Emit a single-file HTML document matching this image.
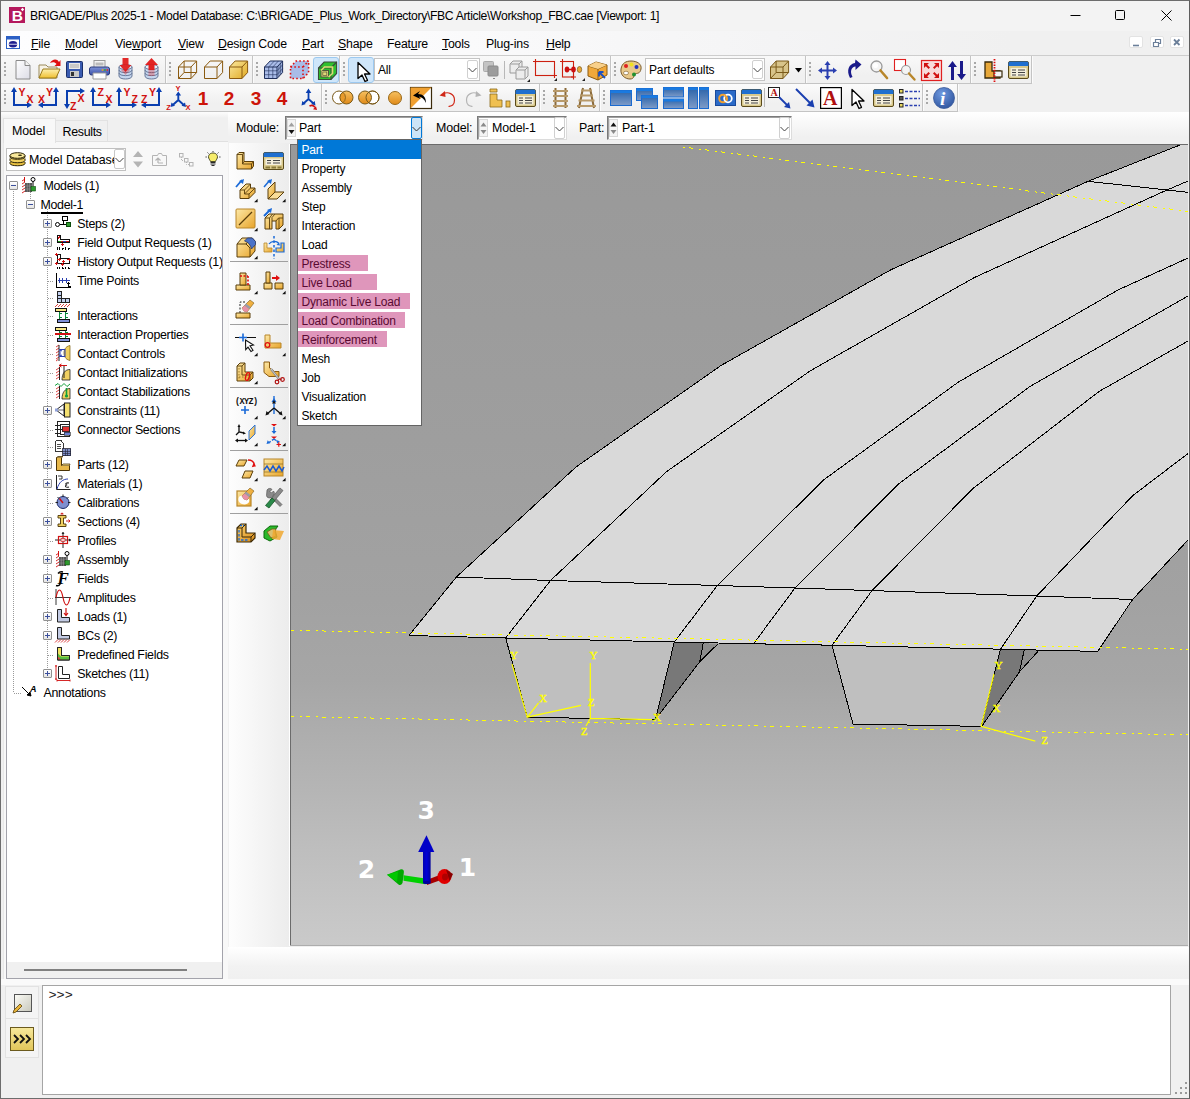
<!DOCTYPE html><html><head><meta charset="utf-8"><title>BRIGADE/Plus</title><style>
*{box-sizing:border-box}
html,body{margin:0;padding:0}
body{width:1190px;height:1099px;overflow:hidden;position:relative;background:#f0f0f0;
 font-family:"Liberation Sans",sans-serif;font-size:12px;color:#000;letter-spacing:-0.15px}
.a{position:absolute}
.t{position:absolute;white-space:pre;line-height:14px;height:14px}
u{text-decoration:underline;text-underline-offset:1px}
svg{position:absolute;overflow:visible}
.grip{position:absolute;width:2px;height:14px;background:repeating-linear-gradient(to bottom,#a8a8a8 0 2px,transparent 2px 4px)}
.tbg{position:absolute;border:1px solid #c9c9c9;border-top:none;border-left:none;background:#f0f0f0}
.combo{position:absolute;background:#fff;border:1px solid #c4c4c4}
.sunk{position:absolute;background:#fff;border:1px solid #7a7a7a;border-right-color:#dcdcdc;border-bottom-color:#dcdcdc;box-shadow:inset 1px 1px 0 #a0a0a0}
.row{position:absolute;left:0;height:19px;white-space:pre}
.bx{position:absolute;width:9px;height:9px;border:1px solid #919191;background:linear-gradient(#fff,#e4e4e4);border-radius:1px}
.bx:before{content:"";position:absolute;left:1px;top:3px;width:5px;height:1px;background:#3b4f9c}
.bx.p:after{content:"";position:absolute;left:3px;top:1px;width:1px;height:5px;background:#3b4f9c}
</style></head><body>
<div class="a" style="left:0;top:0;width:1190px;height:31px;background:#f3f3f3"></div>
<div class="a" style="left:9px;top:7px;width:16px;height:16px;background:#b4185c;border-radius:0"></div>
<div class="t" style="left:11.700px;top:7.500px;height:16px;line-height:16px;font-weight:bold;font-size:15.500px;color:#fff;letter-spacing:0">B</div><div class="a" style="left:21px;top:8px;width:3px;height:3px;background:#fff;transform:rotate(45deg) scale(.8)"></div>
<div class="t" style="left:30px;top:8px;font-size:12.2px;letter-spacing:-0.355px;line-height:16px;height:16px">BRIGADE/Plus 2025-1 - Model Database: C:\BRIGADE_Plus_Work_Directory\FBC Article\Workshop_FBC.cae [Viewport: 1]</div>
<svg style="left:1060px;top:0" width="130" height="31"><path d="M10.5 15.5h10" stroke="#000" fill="none"/><rect x="55.5" y="10.5" width="9" height="9" rx="1" stroke="#000" fill="none"/><path d="M101.5 10.5l10 10m0-10l-10 10" stroke="#000" fill="none"/></svg>
<div class="a" style="left:1px;top:31px;width:1188px;height:24px;background:linear-gradient(to right,#fdfdfe 0,#fbfbfc 35%,#f4f4f5 65%,#f0f0f0 85%)"></div>
<div class="a" style="left:1px;top:55px;width:1188px;height:1px;background:#cdcdcd"></div>
<svg style="left:6px;top:36px" width="15" height="14"><rect x=".5" y=".5" width="13" height="12" fill="#fff" stroke="#2b5fc4"/><rect x="1" y="1" width="12" height="2.5" fill="#2b5fc4"/><ellipse cx="7" cy="8.200" rx="4.200" ry="3.300" fill="#1f1f8f"/><rect x="2.500" y="7.800" width="9" height=".8" fill="#fff"/></svg>
<div class="t" style="left:31px;top:37px;font-size:12.3px;letter-spacing:-0.2px"><u>F</u>ile</div>
<div class="t" style="left:65px;top:37px;font-size:12.3px;letter-spacing:-0.2px"><u>M</u>odel</div>
<div class="t" style="left:115px;top:37px;font-size:12.3px;letter-spacing:-0.2px">Vie<u>w</u>port</div>
<div class="t" style="left:178px;top:37px;font-size:12.3px;letter-spacing:-0.2px"><u>V</u>iew</div>
<div class="t" style="left:218px;top:37px;font-size:12.3px;letter-spacing:-0.2px"><u>D</u>esign Code</div>
<div class="t" style="left:302px;top:37px;font-size:12.3px;letter-spacing:-0.2px"><u>P</u>art</div>
<div class="t" style="left:338px;top:37px;font-size:12.3px;letter-spacing:-0.2px"><u>S</u>hape</div>
<div class="t" style="left:387px;top:37px;font-size:12.3px;letter-spacing:-0.2px">Feat<u>u</u>re</div>
<div class="t" style="left:442px;top:37px;font-size:12.3px;letter-spacing:-0.2px"><u>T</u>ools</div>
<div class="t" style="left:486px;top:37px;font-size:12.3px;letter-spacing:-0.2px">Plu<u>g</u>-ins</div>
<div class="t" style="left:546px;top:37px;font-size:12.3px;letter-spacing:-0.2px"><u>H</u>elp</div>
<div class="a" style="left:1129px;top:36px;width:14px;height:12px;background:#fff;border:1px solid #e3e3e3;border-radius:2px"></div>
<div class="a" style="left:1150px;top:36px;width:14px;height:12px;background:#fff;border:1px solid #e3e3e3;border-radius:2px"></div>
<div class="a" style="left:1170px;top:36px;width:14px;height:12px;background:#fff;border:1px solid #e3e3e3;border-radius:2px"></div>
<svg style="left:1129px;top:36px" width="56" height="12"><path d="M4 9.5h6" stroke="#6b7f99" stroke-width="1.6" fill="none"/><path d="M24.5 6.5h5v4h-5z M26.5 6v-2.5h5v4h-2" stroke="#6b7f99" stroke-width="1.2" fill="none"/><path d="M45 3.5l5.5 5.5m0-5.5l-5.5 5.5" stroke="#6b7f99" stroke-width="1.8" fill="none"/></svg>
<div class="a" style="left:1px;top:56px;width:1188px;height:56px;background:#f0f0f0"></div>
<div class="a" style="left:1px;top:56px;width:1031px;height:27px;background:linear-gradient(#f9f9f9,#f0f0f0 70%)"></div>
<div class="a" style="left:1px;top:84px;width:957px;height:27px;background:linear-gradient(#fbfbfb,#f0f0f0 70%)"></div>
<div class="a" style="left:165px;top:56px;width:1px;height:27px;background:#c4c4c4;box-shadow:1px 0 0 #fbfbfb"></div>
<div class="grip" style="left:4px;top:62px"></div>
<div class="a" style="left:252px;top:56px;width:1px;height:27px;background:#c4c4c4;box-shadow:1px 0 0 #fbfbfb"></div>
<div class="grip" style="left:169px;top:62px"></div>
<div class="a" style="left:339px;top:56px;width:1px;height:27px;background:#c4c4c4;box-shadow:1px 0 0 #fbfbfb"></div>
<div class="grip" style="left:256px;top:62px"></div>
<div class="a" style="left:610px;top:56px;width:1px;height:27px;background:#c4c4c4;box-shadow:1px 0 0 #fbfbfb"></div>
<div class="grip" style="left:343px;top:62px"></div>
<div class="a" style="left:805px;top:56px;width:1px;height:27px;background:#c4c4c4;box-shadow:1px 0 0 #fbfbfb"></div>
<div class="grip" style="left:614px;top:62px"></div>
<div class="a" style="left:970px;top:56px;width:1px;height:27px;background:#c4c4c4;box-shadow:1px 0 0 #fbfbfb"></div>
<div class="grip" style="left:809px;top:62px"></div>
<div class="a" style="left:1031px;top:56px;width:1px;height:27px;background:#c4c4c4;box-shadow:1px 0 0 #fbfbfb"></div>
<div class="grip" style="left:974px;top:62px"></div>
<div class="a" style="left:321px;top:84px;width:1px;height:27px;background:#c4c4c4;box-shadow:1px 0 0 #fbfbfb"></div>
<div class="grip" style="left:4px;top:90px"></div>
<div class="a" style="left:539px;top:84px;width:1px;height:27px;background:#c4c4c4;box-shadow:1px 0 0 #fbfbfb"></div>
<div class="grip" style="left:325px;top:90px"></div>
<div class="a" style="left:599px;top:84px;width:1px;height:27px;background:#c4c4c4;box-shadow:1px 0 0 #fbfbfb"></div>
<div class="grip" style="left:543px;top:90px"></div>
<div class="a" style="left:922px;top:84px;width:1px;height:27px;background:#c4c4c4;box-shadow:1px 0 0 #fbfbfb"></div>
<div class="grip" style="left:603px;top:90px"></div>
<div class="a" style="left:957px;top:84px;width:1px;height:27px;background:#c4c4c4;box-shadow:1px 0 0 #fbfbfb"></div>
<div class="grip" style="left:926px;top:90px"></div>
<div class="a" style="left:1px;top:111px;width:957px;height:1px;background:#c4c4c4"></div>
<div class="a" style="left:1px;top:83px;width:1031px;height:1px;background:#c4c4c4"></div>
<svg width="0" height="0" style="left:0;top:0"><defs>
<linearGradient id="gpaper" x1="0" y1="0" x2="1" y2="1"><stop offset="0" stop-color="#fff"/><stop offset="1" stop-color="#dcdce6"/></linearGradient>
<linearGradient id="gfold" x1="0" y1="0" x2="0" y2="1"><stop offset="0" stop-color="#fdf0b0"/><stop offset="1" stop-color="#f0c030"/></linearGradient>
<linearGradient id="gprint" x1="0" y1="0" x2="0" y2="1"><stop offset="0" stop-color="#7f94d8"/><stop offset="1" stop-color="#3a4fa8"/></linearGradient>
<linearGradient id="gcube" x1="0" y1="0" x2="1" y2="1"><stop offset="0" stop-color="#fbe9a0"/><stop offset="1" stop-color="#e0a820"/></linearGradient>
<linearGradient id="gorange" x1="0" y1="0" x2="0" y2="1"><stop offset="0" stop-color="#f6c060"/><stop offset="1" stop-color="#e08a18"/></linearGradient>
<linearGradient id="gwin" x1="0" y1="0" x2="0" y2="1"><stop offset="0" stop-color="#2a62a8"/><stop offset="1" stop-color="#7f9cc8"/></linearGradient>
<radialGradient id="ginfo" cx=".4" cy=".3" r=".8"><stop offset="0" stop-color="#6f9ae0"/><stop offset="1" stop-color="#2a4f9a"/></radialGradient>
</defs></svg>
<style>.axl{font-family:"Liberation Sans",sans-serif;font-weight:bold;font-size:10.500px;fill:#d01010;letter-spacing:0}.axs{font-family:"Liberation Sans",sans-serif;font-weight:bold;font-size:7.500px;fill:#d01010;letter-spacing:0}</style>
<svg style="left:15px;top:60px" width="16" height="20"><path d="M1 .5h9l5 5v13.500h-14z" fill="url(#gpaper)" stroke="#8a8a8a"/><path d="M10 .5v5h5" fill="#f4f4f4" stroke="#8a8a8a"/></svg>
<svg style="left:38px;top:58px" width="23" height="21"><path d="M1 7h7l2 2h9v11h-18z" fill="#f7f3e6" stroke="#9a8a5a"/><path d="M1 20l4-9h17l-4 9z" fill="url(#gfold)" stroke="#9a7a1a"/><path d="M12 5c2-4 7-5 9-1l1.500-2v6h-6l2-2c-1.500-2-4-2-6.500-1z" fill="#e01010"/></svg>
<svg style="left:66px;top:61px" width="17" height="17"><rect x=".5" y=".5" width="16" height="16" rx="1" fill="#3a5bb0" stroke="#1a2f6a"/><rect x="3" y="2" width="11" height="6" fill="#e8e8e8"/><path d="M4 4h9M4 6h9" stroke="#999" stroke-width=".8"/><rect x="4" y="10" width="9" height="6" fill="#c8c8c8"/><rect x="5" y="11" width="3" height="4" fill="#333"/></svg>
<svg style="left:89px;top:60px" width="21" height="20"><rect x="5" y=".5" width="11" height="7" fill="#f4f4f4" stroke="#999"/><rect x="6.500" y="2.500" width="8" height="3" fill="#bbb"/><rect x=".5" y="7" width="20" height="8" rx="2" fill="url(#gprint)" stroke="#2a3a7a"/><circle cx="13.500" cy="10" r=".9" fill="#e8a020"/><circle cx="16" cy="10" r=".9" fill="#30b030"/><circle cx="18.300" cy="10" r=".9" fill="#e03030"/><path d="M4 13h13v6h-13z" fill="#fff" stroke="#999"/></svg>
<svg style="left:118px;top:58px" width="16" height="23"><path d="M1 9v9c0 4 13 4 13 0v-9" fill="#c6d6ee" stroke="#6a7a9a"/><ellipse cx="7.500" cy="9" rx="6.500" ry="2.500" fill="#e6eefa" stroke="#6a7a9a"/><path d="M1 12c0 3.500 13 3.500 13 0M1 15c0 3.500 13 3.500 13 0" fill="none" stroke="#6a7a9a"/><path d="M4.500 0h6v7h3l-6 7-6-7h3z" fill="#e01818" opacity=".92"/><path d="M3 12l4.500 5 4.500-5z" fill="#e01818" opacity=".35"/></svg>
<svg style="left:144px;top:58px" width="16" height="23"><path d="M1 9v9c0 4 13 4 13 0v-9" fill="#c6d6ee" stroke="#6a7a9a"/><ellipse cx="7.500" cy="9" rx="6.500" ry="2.500" fill="#e6eefa" stroke="#6a7a9a"/><path d="M1 12c0 3.500 13 3.500 13 0M1 15c0 3.500 13 3.500 13 0" fill="none" stroke="#6a7a9a"/><path d="M7.500 0l6.500 7h-3.500v5h-6v-5h-3.500z" fill="#e01818" opacity=".95"/><path d="M4.500 12h6v6h-6z" fill="#e01818" opacity=".3"/></svg>
<svg style="left:177.5px;top:59.5px" width="20" height="20"><path d="M.5 7l5.600-6h12.500v11.500l-5.600 6h-12.500z" fill="none" stroke="#8a5a10" stroke-width="1"/><path d="M.5 7h12.500v11.500M13 7l5.600-6" fill="none" stroke="#8a5a10" stroke-width="1"/><path d="M6.100 1v11.500h12.500M6.100 12.500l-5.600 6" fill="none" stroke="#8a5a10" stroke-width="1"/></svg>
<svg style="left:203.5px;top:59.5px" width="20" height="20"><path d="M.5 7l5.600-6h12.500v11.500l-5.600 6h-12.500z" fill="none" stroke="#8a5a10" stroke-width="1"/><path d="M.5 7h12.500v11.500M13 7l5.600-6" fill="none" stroke="#8a5a10" stroke-width="1"/></svg>
<svg style="left:229px;top:59.5px" width="20" height="20"><path d="M.5 7l5.600-6h12.500v11.500l-5.600 6h-12.500z" fill="url(#gcube)" stroke="#8a5a10" stroke-width="1"/><path d="M.5 7h12.500v11.500M13 7l5.600-6" fill="none" stroke="#8a5a10" stroke-width="1"/></svg>
<svg style="left:264px;top:59.5px" width="20" height="20"><path d="M.5 7l5.600-6h12.500v11.500l-5.600 6h-12.500z" fill="#a9bce8" stroke="#1f2f5a" stroke-width="1"/><path d="M.5 7h12.500v11.500M13 7l5.600-6" fill="none" stroke="#1f2f5a" stroke-width="1"/><path d="M.5 10.800h12.500l5.600-6M.5 14.700h12.500l5.600-6M4.700 7v11.500M8.800 7v11.500M4.700 7l5.600-6M8.800 7l5.600-6M14.900 5v11.500M16.700 3v11.500" stroke="#1f2f5a" stroke-width=".6" fill="none"/></svg>
<svg style="left:290px;top:59.5px" width="20" height="20"><path d="M.5 7l5.600-6h12.500v11.500l-5.600 6h-12.500z" fill="#a9bce8" stroke="#e01010" stroke-width="1.600" stroke-dasharray="1.600 2.200"/><path d="M.5 7h12.500v11.500M13 7l5.600-6" fill="none" stroke="#e01010" stroke-width="1.600" stroke-dasharray="1.600 2.200"/></svg>
<svg style="left:313px;top:57px" width="26" height="26"><rect x=".5" y=".5" width="25" height="25" rx="2.500" fill="#cfe6fa" stroke="#9cc9f0"/></svg>
<svg style="left:318px;top:60.5px" width="20" height="20"><path d="M.5 7l5.600-6h12.500v11.500l-5.600 6h-12.500z" fill="#2fc02f" stroke="#3a4a3a" stroke-width="1.100"/><path d="M.5 7h12.500v11.500M13 7l5.600-6" fill="none" stroke="#3a4a3a" stroke-width="1.100"/><rect x="3" y="9.500" width="7.500" height="6.500" fill="#e0d878" stroke="#4a4a3a" stroke-width=".9"/><path d="M3 9.500l3.500-3.500h8v6.500l-4 3.500" fill="none" stroke="#e0d878" stroke-width="1.600"/><rect x="4.800" y="11" width="4" height="3.500" fill="#e0d878" stroke="#5a5a3a" stroke-width=".7"/></svg>
<svg style="left:348px;top:57px" width="26" height="26"><rect x=".5" y=".5" width="25" height="25" rx="2.500" fill="#cfe6fa" stroke="#9cc9f0"/></svg>
<svg style="left:357px;top:61.5px" width="14" height="20"><path d="M1 .5v16l4-3.500 3 6.500 2.500-1.200-3-6.300h5.500z" fill="#fff" stroke="#000" stroke-width="1.300" stroke-linejoin="round"/></svg>
<svg style="left:483px;top:61px" width="16" height="18"><rect x=".5" y=".5" width="10" height="10" rx="1" fill="#c4c4c4" stroke="#aaa"/><rect x="5" y="5" width="10" height="10" rx="1" fill="#9c9c9c" stroke="#8a8a8a"/><path d="M10 17.500l2 0" stroke="#888"/></svg>
<svg style="left:504px;top:61px" width="1" height="18"><rect width="1" height="18" fill="#b8b8b8"/></svg>
<svg style="left:509px;top:60px" width="21" height="21"><g fill="#ececec" stroke="#9a9a9a" stroke-width="1"><path d="M1 4l3-3h9v9l-3 3h-9z"/><path d="M1 4h9v9M10 4l3-3"/><path d="M7 10l3-3h9v9l-3 3h-9z"/><path d="M7 10h9v9M16 10l3-3"/></g><path d="M21 19v3h-3z" fill="#222"/></svg>
<svg style="left:533px;top:59px" width="24" height="22"><rect x="2.500" y="2.500" width="19" height="14" fill="none" stroke="#cc2010" stroke-width="1.100"/><path d="M2.500 0v5M0 2.500h5M21.500 14v5M19 16.500h5" stroke="#cc2010" stroke-width="1.100"/><path d="M24 19v3h-3z" fill="#222"/></svg>
<svg style="left:561px;top:59px" width="24" height="22"><rect x="1.500" y="2.500" width="11" height="15.500" fill="none" stroke="#cc2010" stroke-width="1.100"/><path d="M1.500 0v5M-1 2.500h5M12.500 15.500v5M10 18h5" stroke="#cc2010" stroke-width="1.100"/><ellipse cx="6" cy="10.500" rx="2.300" ry="3" fill="#cc1010"/><ellipse cx="12.500" cy="10.500" rx="2.300" ry="3" fill="#cc1010"/><path d="M6 10.500h7" stroke="#cc1010" stroke-width="1.500"/><ellipse cx="18.500" cy="10.500" rx="2.200" ry="3" fill="#e8a83a" stroke="#7a5a1a" stroke-width=".7"/><path d="M24 19v3h-3z" fill="#222"/></svg>
<svg style="left:587px;top:59.5px" width="21" height="21"><path d="M1 6l8-4 11 3v10l-9 5-10-4z" fill="#f0a83a" stroke="#8a5a10"/><path d="M1 6l10 3v11M11 9l9-4" fill="none" stroke="#8a5a10"/><path d="M1 6l8-4 11 3-9 4z" fill="#f8d08a"/><path d="M18 18l-6-6M12 12v4.500M12 12h4.500" stroke="#1a4fc0" stroke-width="1.800" fill="none"/></svg>
<svg style="left:620px;top:60px" width="22" height="20"><path d="M11 1c6 0 11 3 10 8s-4 4-6 5 0 5-5 5-10-4-9-10 5-8 10-8z" fill="#e8c88a" stroke="#7a5a2a"/><circle cx="6" cy="6" r="2" fill="#e02020"/><circle cx="11.500" cy="4.500" r="2" fill="#f0e020"/><circle cx="16.500" cy="7" r="2" fill="#2030c0"/><circle cx="14" cy="14.500" r="2" fill="#209030"/><ellipse cx="6" cy="13" rx="2.500" ry="1.800" fill="#fff" stroke="#7a5a2a" stroke-width=".6"/></svg>
<svg style="left:770px;top:59.5px" width="20" height="20"><path d="M.5 7l5.600-6h12.500v11.500l-5.600 6h-12.500z" fill="#d8c48a" stroke="#7a5a1a" stroke-width="1"/><path d="M.5 7h12.500v11.500M13 7l5.600-6" fill="none" stroke="#7a5a1a" stroke-width="1"/><path d="M6.100 1v11.500h12.500M6.100 12.500l-5.600 6" fill="none" stroke="#7a5a1a" stroke-width="1"/></svg>
<svg style="left:795px;top:67.5px" width="8" height="5"><path d="M0 0h7l-3.500 4.500z" fill="#000"/></svg>
<svg style="left:818px;top:60.5px" width="19" height="19"><path d="M9.500 0l3 4h-2v4.500h4.500v-2l4 3-4 3v-2h-4.500v4.500h2l-3 4-3-4h2v-4.500h-4.500v2l-4-3 4-3v2h4.500v-4.500h-2z" fill="#2a3fb0"/></svg>
<svg style="left:846px;top:60px" width="16" height="20"><path d="M9 3c-6 1-9 7-5 15l2.500-1c-3-6-1-10 3-10.500v3.500l6-5.500-6-5z" fill="#1a1a8a"/></svg>
<svg style="left:870px;top:60px" width="18" height="20"><circle cx="6.500" cy="6.500" r="5.500" fill="#f4f4f4" stroke="#9a9a9a" stroke-width="1.300"/><circle cx="5.500" cy="5.500" r="2.500" fill="#fff"/><path d="M10.500 10.500l6.500 7.500" stroke="#b8862a" stroke-width="2.600" stroke-linecap="round"/></svg>
<svg style="left:893.5px;top:59px" width="22" height="22"><rect x=".5" y=".5" width="11" height="11" fill="#fff" stroke="#e02020" stroke-width="1.100"/><circle cx="12" cy="11" r="4.500" fill="#f4f4f4" stroke="#9a9a9a" stroke-width="1.200"/><path d="M15 14.500l5.500 6" stroke="#b8862a" stroke-width="2.400" stroke-linecap="round"/></svg>
<svg style="left:921px;top:59.5px" width="21" height="21"><rect x=".5" y=".5" width="20" height="20" fill="#f8dada" stroke="#e02020" stroke-width="1.200"/><path d="M3 3h5l-1.800 1.800 2.800 2.800-1.400 1.400-2.800-2.800-1.800 1.800zM18 3v5l-1.800-1.800-2.800 2.800-1.400-1.400 2.800-2.800-1.800-1.800zM3 18v-5l1.800 1.800 2.800-2.800 1.400 1.400-2.800 2.800 1.800 1.800zM18 18h-5l1.800-1.800-2.800-2.800 1.400-1.400 2.800 2.800 1.800-1.800z" fill="#d01010"/></svg>
<svg style="left:948px;top:60.5px" width="18" height="19"><path d="M4.500 0l4.500 6h-3v13h-3v-13h-3zM13.500 19l-4.500-6h3v-13h3v13h3z" fill="#1a1a8a"/></svg>
<svg style="left:984px;top:59px" width="19" height="23"><path d="M1 3h7v9h8v7h-15z" fill="#e8a83a" stroke="#3a2a0a" stroke-width="1.300"/><rect x="10" y="12" width="8" height="6" fill="#f4f4f4" stroke="#3a2a0a" stroke-width="1.200"/><path d="M10.500 0v23" stroke="#e01010" stroke-width="1.800" stroke-dasharray="1.500 1.200"/></svg>
<svg style="left:1008px;top:60px" width="21" height="20"><rect x=".5" y="1.500" width="20" height="17" rx="1.500" fill="#d9c98c" stroke="#5a4a1a"/><path d="M.5 3q0-1.500 1.500-1.500h17q1.500 0 1.500 1.500v3h-20z" fill="#1f6fd0"/><rect x="2.500" y="8" width="16" height="8.500" fill="#f4efdc"/><path d="M4 10h4M4 12.500h4M4 15h4M10 10h7M10 12.500h7M10 15h7" stroke="#444" stroke-width="1.200"/></svg>
<svg style="left:11px;top:87px" width="22" height="22"><path d="M3 3v15h15" stroke="#0a3fb0" stroke-width="2" fill="none"/><path d="M3 0l-3 5h6zM21 18l-5-3v6z" fill="#0a3fb0"/><text x="7.500" y="8.500" class="axl">Y</text><text x="15.500" y="15.500" class="axl">X</text></svg>
<svg style="left:37.5px;top:87px" width="22" height="22"><path d="M18 3v15h-15" stroke="#0a3fb0" stroke-width="2" fill="none"/><path d="M18 0l-3 5h6zM0 18l5-3v6z" fill="#0a3fb0"/><text x="8" y="8.500" class="axl">Y</text><text x="0" y="15.500" class="axl">X</text></svg>
<svg style="left:61.5px;top:86.5px" width="23" height="23"><path d="M5 19v-15h14" stroke="#0a3fb0" stroke-width="2" fill="none"/><path d="M5 22l-3-5h6zM23 4l-5-3v6z" fill="#0a3fb0"/><text x="15.500" y="14.500" class="axl">X</text><text x="8" y="22.500" class="axl">Z</text></svg>
<svg style="left:90px;top:87px" width="22" height="22"><path d="M3 3v15h15" stroke="#0a3fb0" stroke-width="2" fill="none"/><path d="M3 0l-3 5h6zM21 18l-5-3v6z" fill="#0a3fb0"/><text x="7.500" y="8.500" class="axl">Z</text><text x="15.500" y="15.500" class="axl">X</text></svg>
<svg style="left:115.5px;top:87px" width="22" height="22"><path d="M3 3v15h15" stroke="#0a3fb0" stroke-width="2" fill="none"/><path d="M3 0l-3 5h6zM21 18l-5-3v6z" fill="#0a3fb0"/><text x="7.500" y="8.500" class="axl">Y</text><text x="15.500" y="15.500" class="axl">Z</text></svg>
<svg style="left:141px;top:87px" width="22" height="22"><path d="M18 3v15h-15" stroke="#0a3fb0" stroke-width="2" fill="none"/><path d="M18 0l-3 5h6zM0 18l5-3v6z" fill="#0a3fb0"/><text x="8" y="8.500" class="axl">Y</text><text x="0" y="15.500" class="axl">Z</text></svg>
<svg style="left:166px;top:86px" width="24" height="24"><path d="M12.300 8v6l-5.500 5M12.300 14l5.500 5" stroke="#0a3fb0" stroke-width="1.900" fill="none"/><path d="M12.300 5.500l-2.800 4h5.600zM4.500 21l1-4.500 3.500 3.300zM20 21l-1-4.500-3.500 3.300z" fill="#0a3fb0"/><text x="12" y="5" class="axs" text-anchor="middle">Y</text><text x="2.500" y="24" class="axs" text-anchor="middle">Z</text><text x="22" y="24" class="axs" text-anchor="middle">X</text></svg>
<svg style="left:195px;top:88px" width="16" height="18"><text x="8" y="16.800" text-anchor="middle" font-family="Liberation Sans,sans-serif" font-weight="bold" font-size="19" fill="#cd1409" letter-spacing="0">1</text></svg>
<svg style="left:221.3px;top:88px" width="16" height="18"><text x="8" y="16.800" text-anchor="middle" font-family="Liberation Sans,sans-serif" font-weight="bold" font-size="19" fill="#cd1409" letter-spacing="0">2</text></svg>
<svg style="left:247.5px;top:88px" width="16" height="18"><text x="8" y="16.800" text-anchor="middle" font-family="Liberation Sans,sans-serif" font-weight="bold" font-size="19" fill="#cd1409" letter-spacing="0">3</text></svg>
<svg style="left:273.5px;top:88px" width="16" height="18"><text x="8" y="16.800" text-anchor="middle" font-family="Liberation Sans,sans-serif" font-weight="bold" font-size="19" fill="#cd1409" letter-spacing="0">4</text></svg>
<svg style="left:300px;top:87px" width="18" height="22"><path d="M8.500 5v7l-5 4.500M8.500 12l5 4.500" stroke="#0a3fb0" stroke-width="1.800" fill="none"/><path d="M8.500 1.500l-2.800 4.500h5.600zM1.500 18.500l.8-4.500 3.500 3zM15.500 18.500l-.8-4.500-3.500 3z" fill="#0a3fb0"/><path d="M9.500 19c2.500-1.200 4.500-.5 5.500 1.500" stroke="#d01010" stroke-width="1.600" fill="none"/><path d="M17 23l-4-.8 3-3z" fill="#d01010"/></svg>
<svg style="left:332px;top:90px" width="22" height="15"><circle cx="7" cy="7.500" r="6.500" fill="#fff" stroke="#7a5a1a"/><circle cx="14.500" cy="7.500" r="6.500" fill="url(#gorange)" stroke="#7a5a1a"/><path d="M10.750 2.200a6.500 6.500 0 0 1 0 10.600a6.500 6.500 0 0 1 0-10.600z" fill="#e89a2a" stroke="#7a5a1a" stroke-width=".8"/></svg>
<svg style="left:358px;top:90px" width="22" height="15"><circle cx="14.500" cy="7.500" r="6.500" fill="#fff" stroke="#7a5a1a"/><circle cx="7" cy="7.500" r="6.500" fill="url(#gorange)" stroke="#7a5a1a"/><circle cx="14.500" cy="7.500" r="6.500" fill="none" stroke="#7a5a1a"/></svg>
<svg style="left:388px;top:90.5px" width="14" height="14"><circle cx="7" cy="7" r="6.500" fill="url(#gorange)" stroke="#9a6a1a"/></svg>
<svg style="left:410px;top:87px" width="22" height="22"><rect x=".5" y=".5" width="21" height="21" fill="#fff" stroke="#3a2a0a" stroke-width="1.200"/><path d="M.5 21.500v-21h21z" fill="#f0a030"/><path d="M16 16c0-6-3-9-8-9l2-3-7 4.500 7.500 3.500-1.500-2.500c3 .5 5 2.500 7 6.500z" fill="#000"/></svg>
<svg style="left:438.5px;top:89px" width="17" height="17"><path d="M4 5c5-3 11.500 0 11.500 6s-3.500 6-6 6.500" fill="none" stroke="#d02818" stroke-width="1.200"/><path d="M.5 6.500l5.500-4.500.5 6z" fill="#d02818"/></svg>
<svg style="left:465px;top:89px" width="17" height="17"><path d="M13 5c-5-3-11.500 0-11.500 6s3.500 6 6 6.500" fill="none" stroke="#b4b4b4" stroke-width="1.200"/><path d="M16.500 6.500l-5.500-4.500-.5 6z" fill="#b4b4b4"/></svg>
<svg style="left:488.5px;top:88px" width="22" height="20"><path d="M1 1h7v3h-7z" fill="#f0c050" stroke="#8a6a1a" stroke-width=".8"/><path d="M1 6h7v6h5v7h-12z" fill="#f0c050" stroke="#8a6a1a" stroke-width=".8"/><rect x="17" y="13" width="4" height="6" fill="#f0c050" stroke="#8a6a1a" stroke-width=".8"/></svg>
<svg style="left:515px;top:88px" width="21" height="20"><rect x=".5" y="1.500" width="20" height="17" rx="1.500" fill="#d9c98c" stroke="#5a4a1a"/><path d="M.5 3q0-1.500 1.500-1.500h17q1.500 0 1.500 1.500v3h-20z" fill="#1f6fd0"/><rect x="2.500" y="8" width="16" height="8.500" fill="#f4efdc"/><path d="M4 10h4M4 12.500h4M4 15h4M10 10h7M10 12.500h7M10 15h7" stroke="#444" stroke-width="1.200"/></svg>
<svg style="left:552.5px;top:88px" width="15" height="20"><path d="M2.500 0v20M12.500 0v20" stroke="#8a6a3a" stroke-width="2"/><path d="M0 3h15M0 8h15M0 13h15M0 18h15" stroke="#b89a6a" stroke-width="2.200"/></svg>
<svg style="left:577px;top:88px" width="19" height="20"><path d="M6 0l-4 20M13 0l4 20" stroke="#8a6a3a" stroke-width="2"/><path d="M4 2.500h11M3 7.500h13M1.500 12.500h16M0 18h19" stroke="#b89a6a" stroke-width="2.200"/></svg>
<svg style="left:610px;top:90px" width="22" height="16"><rect x="0.5" y="0.5" width="21" height="15" fill="url(#gwin)" stroke="#1a6ad0" stroke-width="1"/><rect x="0.5" y="0.5" width="21" height="2.500" fill="#1a7ae0"/></svg>
<svg style="left:636px;top:87.5px" width="22" height="21"><rect x="0.5" y="0.5" width="16" height="12" fill="url(#gwin)" stroke="#1a6ad0" stroke-width="1"/><rect x="0.5" y="0.5" width="16" height="2.500" fill="#1a7ae0"/><rect x="5.5" y="7.5" width="16" height="13" fill="url(#gwin)" stroke="#1a6ad0" stroke-width="1"/><rect x="5.5" y="7.5" width="16" height="2.500" fill="#1a7ae0"/></svg>
<svg style="left:663px;top:87px" width="21" height="22"><rect x="0.5" y="0.5" width="20" height="9.5" fill="url(#gwin)" stroke="#1a6ad0" stroke-width="1"/><rect x="0.5" y="0.5" width="20" height="2.500" fill="#1a7ae0"/><rect x="0.5" y="12" width="20" height="9.5" fill="url(#gwin)" stroke="#1a6ad0" stroke-width="1"/><rect x="0.5" y="12" width="20" height="2.500" fill="#1a7ae0"/></svg>
<svg style="left:688px;top:87px" width="21" height="22"><rect x="0.5" y="0.5" width="9" height="21" fill="url(#gwin)" stroke="#1a6ad0" stroke-width="1"/><rect x="0.5" y="0.5" width="9" height="2.500" fill="#1a7ae0"/><rect x="11.5" y="0.5" width="9" height="21" fill="url(#gwin)" stroke="#1a6ad0" stroke-width="1"/><rect x="11.5" y="0.5" width="9" height="2.500" fill="#1a7ae0"/></svg>
<svg style="left:715px;top:90px" width="21" height="16"><rect x=".5" y=".5" width="20" height="15" fill="#2a6ac8" stroke="#1a4a9a"/><circle cx="8" cy="8.500" r="3.800" fill="none" stroke="#f0a030" stroke-width="2"/><circle cx="13" cy="8.500" r="3.800" fill="none" stroke="#fff" stroke-width="1.800"/><path d="M9.500 5.500a3.800 3.800 0 0 1 2 5" fill="none" stroke="#f0a030" stroke-width="2"/></svg>
<svg style="left:740.5px;top:88px" width="21" height="20"><rect x=".5" y="1.500" width="20" height="17" rx="1.500" fill="#d9c98c" stroke="#5a4a1a"/><path d="M.5 3q0-1.500 1.500-1.500h17q1.500 0 1.500 1.500v3h-20z" fill="#1f6fd0"/><rect x="2.500" y="8" width="16" height="8.500" fill="#f4efdc"/><path d="M4 10h4M4 12.500h4M4 15h4M10 10h7M10 12.500h7M10 15h7" stroke="#444" stroke-width="1.200"/></svg>
<svg style="left:764px;top:88px" width="1" height="19"><rect width="1" height="19" fill="#b8b8b8"/></svg>
<svg style="left:767.5px;top:87px" width="23" height="22"><rect x=".5" y=".5" width="11" height="10" fill="#fff" stroke="#222"/><text x="2.500" y="9" font-family="Liberation Serif,serif" font-weight="bold" font-size="10" fill="#b01010" letter-spacing="0">A</text><path d="M11 10l9 9" stroke="#1a3fb0" stroke-width="1.800"/><path d="M22.500 21.500l-6.500-1.500 5-5z" fill="#1a3fb0"/></svg>
<svg style="left:795px;top:88px" width="20" height="20"><path d="M1 1l14 14" stroke="#1a3fb0" stroke-width="2"/><path d="M19.500 19.500l-8-2 6-6z" fill="#1a3fb0"/></svg>
<svg style="left:820px;top:87px" width="22" height="22"><rect x=".6" y=".6" width="20.800" height="20.800" fill="#fff" stroke="#000" stroke-width="1.200"/><text x="3" y="18" font-family="Liberation Serif,serif" font-weight="bold" font-size="20" fill="#b01010" letter-spacing="0">A</text></svg>
<svg style="left:851px;top:88.5px" width="14" height="20"><path d="M1 .5v16l4-3.500 3 6.500 2.500-1.200-3-6.300h5.500z" fill="#fff" stroke="#000" stroke-width="1.300" stroke-linejoin="round"/></svg>
<svg style="left:873px;top:88px" width="21" height="20"><rect x=".5" y="1.500" width="20" height="17" rx="1.500" fill="#d9c98c" stroke="#5a4a1a"/><path d="M.5 3q0-1.500 1.500-1.500h17q1.500 0 1.500 1.500v3h-20z" fill="#1f6fd0"/><rect x="2.500" y="8" width="16" height="8.500" fill="#f4efdc"/><path d="M4 10h4M4 12.500h4M4 15h4M10 10h7M10 12.500h7M10 15h7" stroke="#444" stroke-width="1.200"/></svg>
<svg style="left:899px;top:88.5px" width="21" height="19"><g fill="#e8d860" stroke="#222" stroke-width="1"><rect x=".5" y=".5" width="3.500" height="3.500"/><rect x=".5" y="14.500" width="3.500" height="3.500"/></g><rect x=".5" y="7.500" width="3.500" height="3.500" fill="#555" stroke="#222"/><path d="M6 2.500h15M6 9.500h15M6 16.500h15" stroke="#2a3fb0" stroke-width="1.300" stroke-dasharray="3 1.500"/></svg>
<svg style="left:933px;top:87px" width="22" height="22"><circle cx="11" cy="11" r="10.500" fill="url(#ginfo)" stroke="#3a5a9a" stroke-width=".8"/><text x="7" y="17.500" font-family="Liberation Serif,serif" font-style="italic" font-weight="bold" font-size="19" fill="#fff" letter-spacing="0">i</text></svg>
<div class="combo" style="left:374px;top:58px;width:106px;height:23px"></div>
<div class="t" style="left:378px;top:62.5px;font-size:12px">All</div>
<div class="a" style="left:467px;top:60px;width:11px;height:19px;border:1px solid #d0d0d0;border-radius:2px;background:#fff"></div>
<svg style="left:468px;top:66.5px" width="9" height="6"><path d="M0.5 1l4 4 4-4" stroke="#444" fill="none"/></svg>
<div class="combo" style="left:645px;top:58px;width:120px;height:23px"></div>
<div class="t" style="left:649px;top:62.5px;font-size:12px">Part defaults</div>
<div class="a" style="left:752px;top:60px;width:11px;height:19px;border:1px solid #d0d0d0;border-radius:2px;background:#fff"></div>
<svg style="left:753px;top:66.5px" width="9" height="6"><path d="M0.5 1l4 4 4-4" stroke="#444" fill="none"/></svg>
<div class="a" style="left:1px;top:112px;width:227px;height:870px;background:#f0f0f0"></div>
<div class="a" style="left:1px;top:112px;width:1188px;height:6px;background:linear-gradient(#fdfdfd,#f0f0f0)"></div>
<div class="a" style="left:3px;top:142px;width:225px;height:843px;background:#f8f8f8;border-left:1px solid #e8e8e8"></div>
<div class="a" style="left:56px;top:141px;width:172px;height:1px;background:#e0e0e0"></div>
<div class="a" style="left:3px;top:118px;width:53px;height:25px;background:#f8f8f8;border:1px solid #e2e2e2;border-bottom:none"></div>
<div class="a" style="left:56px;top:120px;width:52px;height:21px;background:#f0f0f0;border:1px solid #e2e2e2;border-bottom:none;border-left:none"></div>
<div class="t" style="left:12px;top:124px;font-size:12.4px">Model</div>
<div class="t" style="left:62.500px;top:125px;font-size:12.4px;letter-spacing:-0.3px">Results</div>
<div class="combo" style="left:6px;top:148px;width:120px;height:23px;border-color:#c0c0c0"></div>
<div class="t" style="left:29px;top:153px;font-size:12.4px;letter-spacing:-0.05px">Model Database</div>
<div class="a" style="left:114px;top:149px;width:11px;height:20px;border:1px solid #c8c8c8;border-radius:2px;background:#fff"></div>
<svg style="left:115px;top:157px" width="9" height="6"><path d="M0.5 1l4 4 4-4" stroke="#444" fill="none"/></svg>
<svg style="left:8.500px;top:152px" width="17" height="15"><g stroke="#2a2206" stroke-width="1"><path d="M1 10v1.500c0 3 15 3 15 0v-1.500" fill="#e8c040"/><path d="M1 6.500v2c0 3 15 3 15 0v-2" fill="#f0d060"/><path d="M1 3.500v1.500c0 3 15 3 15 0v-1.500" fill="#f4dc78"/><ellipse cx="8.500" cy="3.500" rx="7.500" ry="2.800" fill="#f8e89a"/></g><ellipse cx="11" cy="3.300" rx="2" ry=".8" fill="#2a2206"/></svg>
<svg style="left:133px;top:151px" width="10" height="16"><path d="M0 6l5-6 5 6zM0 10.500l5 6 5-6z" fill="#b4b4b4"/></svg>
<svg style="left:152px;top:152.500px" width="15" height="13"><path d="M.5 2.500h5l1-2h3l1 2h4v10h-14z" fill="none" stroke="#b4b4b4"/><path d="M6 10v-5M3.500 7.500l2.500-2.500 2.500 2.500M6 10h5" fill="none" stroke="#b4b4b4" stroke-width="1.200"/></svg>
<svg style="left:178.500px;top:152.500px" width="15" height="14"><g fill="none" stroke="#b4b4b4"><rect x=".5" y=".5" width="3.500" height="3.500"/><rect x="5.500" y="5.500" width="3.500" height="3.500"/><rect x="10.500" y="9.500" width="3.500" height="3.500"/><path d="M2.500 4v3.500h3M7.500 9v2.500h3" stroke-dasharray="1 1"/></g></svg>
<svg style="left:204.500px;top:150.500px" width="16" height="16"><path d="M8 2c3.500 0 4.500 2.500 4.500 4s-1.500 3-2 4.500h-5c-.5-1.500-2-3-2-4.500s1-4 4.500-4z" fill="#f6ec6a" stroke="#3a3a1a" stroke-width=".9"/><path d="M5.500 11.500h5M5.500 13h5M6.500 14.500h3" stroke="#2a2a2a" stroke-width="1.100"/><path d="M8 0v1M2.500 1.500l1 1M13.500 1.500l-1 1M.5 6h1.300M14.200 6h1.300" stroke="#2a2a2a" stroke-width=".9"/></svg>
<div class="a" style="left:6px;top:175px;width:217px;height:804px;background:#fff;border:1px solid #a3a3ab"></div>
<div class="a" style="left:7px;top:962px;width:215px;height:16px;background:#f0f0f0"></div>
<div class="a" style="left:24px;top:969px;width:163px;height:2px;background:#808080"></div>
<div class="a" style="left:7px;top:176px;width:215px;height:786px;overflow:hidden">
<div class="a" style="left:6px;top:15px;width:1px;height:502px;background:repeating-linear-gradient(to bottom,#9a9a9a 0 1px,transparent 1px 2px)"></div>
<div class="a" style="left:23px;top:14px;width:1px;height:10px;background:repeating-linear-gradient(to bottom,#9a9a9a 0 1px,transparent 1px 2px)"></div>
<div class="a" style="left:40px;top:33px;width:1px;height:465px;background:repeating-linear-gradient(to bottom,#9a9a9a 0 1px,transparent 1px 2px)"></div>
<div class="bx" style="left:2px;top:5px"></div>
<svg style="left:14px;top:1px" width="16" height="16" viewBox="0 0 16 16"><path d="M1 4l3-2M1 7l3-2M1 10l3-2M1 13l3-2M1 16l3-2" stroke="#d01010" stroke-width=".9"/><path d="M3.5 0v5" stroke="#d01010"/><rect x="4" y="6" width="7" height="9" fill="#555"/><path d="M4 9h7M4 12h7M6.3 6v9M8.6 6v9" stroke="#999" stroke-width=".6"/><circle cx="12" cy="2.5" r="2" fill="#fff" stroke="#000"/><path d="M12 4.5v5" stroke="#000"/><rect x="10" y="9.5" width="4.5" height="4.5" fill="#2e9a2e" stroke="#0a4a0a" stroke-width=".6"/></svg>
<div class="t" style="left:36.5px;top:3px;font-size:12.4px;letter-spacing:-0.3px">Models (1)</div>
<div class="bx" style="left:19px;top:24px"></div>
<div class="t" style="left:33.5px;top:22px;font-size:12.4px;letter-spacing:-0.3px;border-bottom:2px solid #000;height:15.500px">Model-1</div>
<div class="bx p" style="left:36px;top:43px"></div>
<svg style="left:48px;top:38px" width="16" height="16" viewBox="0 0 16 16" shape-rendering="crispEdges"><path d="M4.500 10.500h7M8.500 6.500v4" stroke="#000"/><circle cx="2.500" cy="10.500" r="2" fill="#fff" stroke="#000" shape-rendering="auto"/><rect x="7.500" y="2.500" width="5" height="4" fill="#fff" stroke="#000"/><rect x="11.500" y="8.500" width="4" height="4" fill="#2e9a2e" stroke="#0a4a0a"/></svg>
<div class="t" style="left:70.3px;top:41px;font-size:12.4px;letter-spacing:-0.3px">Steps (2)</div>
<div class="bx p" style="left:36px;top:62px"></div>
<svg style="left:48px;top:58px" width="16" height="16" viewBox="0 0 16 16" shape-rendering="crispEdges"><path d="M2.500 1.500h3v4h9v3h-12z" fill="#fff" stroke="#111"/><path d="M3 5l2-3M6 7.500h3M11 7.500h3" stroke="#d01010"/><path d="M3 7.500h3" stroke="#1a9a1a"/><path d="M8 7.500h3" stroke="#2a3fb0"/><path d="M7.500 9v3M6 10.500h3" stroke="#d01010"/><path d="M2.500 13v3M4.500 13v3M10.500 13v3" stroke="#000"/><path d="M6.500 14.500h2M7.500 13.500v2M12.500 14.500h2M13.500 13.500v2" stroke="#000"/></svg>
<div class="t" style="left:70.3px;top:60px;font-size:12.4px;letter-spacing:-0.3px">Field Output Requests (1)</div>
<div class="bx p" style="left:36px;top:81px"></div>
<svg style="left:48px;top:77px" width="16" height="16" viewBox="0 0 16 16" shape-rendering="crispEdges"><path d="M2.500 1.500h3v4h9v5h-12z" fill="#fff" stroke="#111"/><path d="M0 1.500h3M1.500 0v3M2 6.500h4M4 5v3M12 6.500h4M14 5v3M7 8.500h3M8.500 7v3M0 10.500h3M1.500 9v3M7.500 10v3M6 11.500h3" stroke="#d01010"/><path d="M2.500 14v2M4.500 14v2M10.500 14v2" stroke="#000"/><path d="M6.500 15h2M7.500 14v2M12.500 15h2M13.500 14v2" stroke="#000"/></svg>
<div class="t" style="left:70.3px;top:79px;font-size:12.4px;letter-spacing:-0.3px">History Output Requests (1)</div>
<div class="a" style="left:41px;top:105px;width:5px;height:1px;background:repeating-linear-gradient(to right,#9a9a9a 0 1px,transparent 1px 2px)"></div>
<svg style="left:48px;top:97px" width="16" height="16" viewBox="0 0 16 16" shape-rendering="crispEdges"><path d="M1.500 0v14.500h14" stroke="#000" fill="none"/><path d="M3 7.500h12" stroke="#2a3fb0"/><path d="M4.500 5v5M7.500 5v5M11.500 5v5" stroke="#2a3fb0"/><path d="M13.500 9v4h2M12 10.500h3" stroke="#000" fill="none"/></svg>
<div class="t" style="left:70.3px;top:98px;font-size:12.4px;letter-spacing:-0.3px">Time Points</div>
<div class="a" style="left:41px;top:122px;width:5px;height:1px;background:repeating-linear-gradient(to right,#9a9a9a 0 1px,transparent 1px 2px)"></div>
<svg style="left:48px;top:115px" width="16" height="16" viewBox="0 0 16 16" shape-rendering="crispEdges"><path d="M2.500 .5h4v7h8v4h-12z" fill="#c3d1f0" stroke="#222"/><path d="M2.500 4h4M2.500 7.500h4M6.500 7.500v4M10.500 7.500v4" stroke="#222"/><path shape-rendering="auto" d="M0 16l3-3M3 16l3-3M6 16l3-3M9 16l3-3M12 16l3-3" stroke="#d01010" stroke-width=".8" fill="none"/></svg>
<div class="a" style="left:41px;top:140px;width:5px;height:1px;background:repeating-linear-gradient(to right,#9a9a9a 0 1px,transparent 1px 2px)"></div>
<svg style="left:48px;top:131px" width="16" height="16" viewBox="0 0 16 16" shape-rendering="crispEdges"><rect x=".5" y="1.500" width="11" height="3" fill="#f8e888" stroke="#111"/><rect x="2.500" y="12.500" width="12" height="3" fill="#7f90d8" stroke="#111"/><path d="M4.500 5v7M10.500 5v7" stroke="#0a8a3a"/><path d="M3.500 6.500h3M3.500 10.500h3M9.500 6.500h3M9.500 10.500h3" stroke="#0a8a3a"/></svg>
<div class="t" style="left:70.3px;top:133px;font-size:12.4px;letter-spacing:-0.3px">Interactions</div>
<div class="a" style="left:41px;top:159px;width:5px;height:1px;background:repeating-linear-gradient(to right,#9a9a9a 0 1px,transparent 1px 2px)"></div>
<svg style="left:48px;top:150px" width="16" height="16" viewBox="0 0 16 16" shape-rendering="crispEdges"><rect x=".5" y="1.500" width="11" height="3" fill="#f8e888" stroke="#111"/><rect x="2.500" y="12.500" width="12" height="3" fill="#7f90d8" stroke="#111"/><path d="M4.500 5v7M10.500 5v7" stroke="#0a8a3a"/><path d="M3.500 6.500h3M3.500 10.500h3M9.500 6.500h3M9.500 10.500h3" stroke="#0a8a3a"/><path d="M0 8h16" stroke="#d01010" stroke-width="1.3"/></svg>
<div class="t" style="left:70.3px;top:152px;font-size:12.4px;letter-spacing:-0.3px">Interaction Properties</div>
<div class="a" style="left:41px;top:178px;width:5px;height:1px;background:repeating-linear-gradient(to right,#9a9a9a 0 1px,transparent 1px 2px)"></div>
<svg style="left:48px;top:169px" width="16" height="16" viewBox="0 0 16 16"><path d="M1 2l3-2M1 5l3-2M1 8l3-2M1 11l3-2M1 14l3-2M1 16l2-1.5" stroke="#d01010" stroke-width=".8"/><path d="M4 0v16" stroke="#222"/><path d="M15 .5c-5 1-6 5-6 7.5s1 6.500 6 7.500z" fill="#f0d060" stroke="#7a5a0a" stroke-width=".7"/><rect x="5" y="4.5" width="5" height="7" fill="none" stroke="#2a3fb0"/><path d="M4 4.500l3 1.5M4 11.500l3-1.500" stroke="#2a3fb0"/></svg>
<div class="t" style="left:70.3px;top:171px;font-size:12.4px;letter-spacing:-0.3px">Contact Controls</div>
<div class="a" style="left:41px;top:197px;width:5px;height:1px;background:repeating-linear-gradient(to right,#9a9a9a 0 1px,transparent 1px 2px)"></div>
<svg style="left:48px;top:188px" width="16" height="16" viewBox="0 0 16 16"><path d="M1 6l3-2M1 9l3-2M1 12l3-2M1 15l3-2" stroke="#d01010" stroke-width=".8"/><path d="M4.5 3v13" stroke="#222"/><path d="M15 5.500c-5 0-8 4-8 10.500h8z" fill="#f0d060" stroke="#222" stroke-width=".8"/><path d="M9 2v12" stroke="#222"/><path d="M4 1.500h8M4 1.500l2.500-1.500M4 1.500l2.500 1.500" stroke="#d01010" fill="none"/></svg>
<div class="t" style="left:70.3px;top:190px;font-size:12.4px;letter-spacing:-0.3px">Contact Initializations</div>
<div class="a" style="left:41px;top:216px;width:5px;height:1px;background:repeating-linear-gradient(to right,#9a9a9a 0 1px,transparent 1px 2px)"></div>
<svg style="left:48px;top:207px" width="16" height="16" viewBox="0 0 16 16"><path d="M1 6l3-2M1 9l3-2M1 12l3-2M1 15l3-2" stroke="#d01010" stroke-width=".8"/><path d="M4.500 3v13" stroke="#222"/><path d="M15 5.500c-5 0-8 4-8 10.500h8z" fill="#f0d060" stroke="#222" stroke-width=".8"/><path d="M0 2.500l3-2 3 3 3-3 3 3 3-2.500" stroke="#12a03a" fill="none"/><path d="M11.500 5v8" stroke="#12a03a" stroke-width="1.600"/><circle cx="11.500" cy="13" r="1.600" fill="#12a03a"/></svg>
<div class="t" style="left:70.3px;top:209px;font-size:12.4px;letter-spacing:-0.3px">Contact Stabilizations</div>
<div class="bx p" style="left:36px;top:230px"></div>
<svg style="left:48px;top:226px" width="16" height="16" viewBox="0 0 16 16"><path d="M1 8l8-6v12z" fill="#fff" stroke="#222"/><path d="M1 8h8" stroke="#222" stroke-width=".7"/><rect x="9.500" y="1" width="5.500" height="14" fill="#f4e070" stroke="#222"/><rect x="0" y="6.500" width="3" height="3" fill="#8fa0d8"/></svg>
<div class="t" style="left:70.3px;top:228px;font-size:12.4px;letter-spacing:-0.3px">Constraints (11)</div>
<div class="a" style="left:41px;top:254px;width:5px;height:1px;background:repeating-linear-gradient(to right,#9a9a9a 0 1px,transparent 1px 2px)"></div>
<svg style="left:48px;top:245px" width="16" height="16" viewBox="0 0 16 16" shape-rendering="crispEdges"><rect x="2.500" y=".5" width="12" height="15" fill="#fff" stroke="#222"/><rect x="5" y="3" width="9" height="10" fill="none" stroke="#222"/><rect x="7" y="5.500" width="7" height="5" fill="#e03030" stroke="#222" stroke-width=".8"/><path d="M0 4h5M0 8h7M0 12h5" stroke="#222"/><rect x="9" y="11" width="6" height="3" fill="#6a7fd0" stroke="#222" stroke-width=".6"/></svg>
<div class="t" style="left:70.3px;top:247px;font-size:12.4px;letter-spacing:-0.3px">Connector Sections</div>
<div class="a" style="left:41px;top:271px;width:5px;height:1px;background:repeating-linear-gradient(to right,#9a9a9a 0 1px,transparent 1px 2px)"></div>
<svg style="left:48px;top:264px" width="16" height="16" viewBox="0 0 16 16" shape-rendering="crispEdges"><path d="M.5 .5h6l2 2v9h-8z" fill="#fff" stroke="#222" stroke-width=".9"/><path d="M2 4h4M2 6h4M2 8h4" stroke="#222" stroke-width=".8"/><rect x="7.500" y="8.500" width="8" height="7" fill="#7f8fc8" stroke="#223" stroke-width=".8"/><path d="M7.500 11h8M7.500 13.300h8M10.200 8.500v7M12.800 8.500v7" stroke="#223" stroke-width=".6"/></svg>
<div class="bx p" style="left:36px;top:284px"></div>
<svg style="left:48px;top:280px" width="16" height="16" viewBox="0 0 16 16"><path d="M1.500 1.500h5v8h8v5h-13z" fill="#e8b84a" stroke="#4a3206" stroke-width="1"/><path d="M1.500 1.500l1.500-1h5l-1.500 1M6.500 9.500l1.500-1.500h7l-.5 1.500" fill="#f6dc8a" stroke="#4a3206" stroke-width=".8"/></svg>
<div class="t" style="left:70.3px;top:282px;font-size:12.4px;letter-spacing:-0.3px">Parts (12)</div>
<div class="bx p" style="left:36px;top:303px"></div>
<svg style="left:48px;top:299px" width="16" height="16" viewBox="0 0 16 16"><path d="M1.500 0v14.500h14" stroke="#222" fill="none"/><path d="M2 14c2-7 6-10 11-10" stroke="#2a3fb0" fill="none"/><path d="M3 1h4v3h-3" stroke="#222" fill="none" stroke-width=".9"/><path d="M14 8c-3-.5-4 1-2.500 2-2 1-1 3 2.500 2" stroke="#222" fill="none" stroke-width="1.100"/></svg>
<div class="t" style="left:70.3px;top:301px;font-size:12.4px;letter-spacing:-0.3px">Materials (1)</div>
<div class="a" style="left:41px;top:327px;width:5px;height:1px;background:repeating-linear-gradient(to right,#9a9a9a 0 1px,transparent 1px 2px)"></div>
<svg style="left:48px;top:318px" width="16" height="16" viewBox="0 0 16 16"><circle cx="8" cy="8.500" r="6" fill="#7f8fd0" stroke="#1a2a6a" stroke-width="1"/><path d="M8 .5v2.500M.5 8.500h2.500M13 8.500h2.500M2.500 3l1.500 1.500M13.500 3l-1.500 1.500" stroke="#222"/><path d="M8 9l-3.500-4.500" stroke="#d01010" stroke-width="1.500"/></svg>
<div class="t" style="left:70.3px;top:320px;font-size:12.4px;letter-spacing:-0.3px">Calibrations</div>
<div class="bx p" style="left:36px;top:341px"></div>
<svg style="left:48px;top:337px" width="16" height="16" viewBox="0 0 16 16"><path d="M3 2.500h8v2.500h-2.500v6h2.500v2.500h-8v-2.500h2.500v-6h-2.500z" fill="#f0d060" stroke="#4a3206" stroke-width=".9"/><path d="M7 0v2.500M5.500 1l1.500-1 1.500 1M11 8h4M13.500 6.500l1.500 1.500-1.500 1.500" stroke="#d01010" fill="none" stroke-width=".9"/></svg>
<div class="t" style="left:70.3px;top:339px;font-size:12.4px;letter-spacing:-0.3px">Sections (4)</div>
<div class="a" style="left:41px;top:365px;width:5px;height:1px;background:repeating-linear-gradient(to right,#9a9a9a 0 1px,transparent 1px 2px)"></div>
<svg style="left:48px;top:356px" width="16" height="16" viewBox="0 0 16 16"><path d="M8 0v16M0 8h16" stroke="#222"/><rect x="3.500" y="4.500" width="9" height="7" fill="none" stroke="#d01010" stroke-width="1.200"/><rect x="6" y="6.500" width="4" height="3" fill="#f6c8c8" stroke="#d01010" stroke-width=".6"/><path d="M14 6.500l2 1.500-2 1.500M6.500 2l1.500-2 1.500 2" fill="#222"/></svg>
<div class="t" style="left:70.3px;top:358px;font-size:12.4px;letter-spacing:-0.3px">Profiles</div>
<div class="bx p" style="left:36px;top:379px"></div>
<svg style="left:48px;top:375px" width="16" height="16" viewBox="0 0 16 16"><path d="M1 4l3-2M1 7l3-2M1 10l3-2M1 13l3-2M1 16l3-2" stroke="#d01010" stroke-width=".9"/><path d="M3.5 0v5" stroke="#d01010"/><rect x="4" y="6" width="7" height="9" fill="#555"/><path d="M4 9h7M4 12h7M6.3 6v9M8.6 6v9" stroke="#999" stroke-width=".6"/><circle cx="12" cy="2.5" r="2" fill="#fff" stroke="#000"/><path d="M12 4.5v5" stroke="#000"/><rect x="10" y="9.5" width="4.5" height="4.5" fill="#2e9a2e" stroke="#0a4a0a" stroke-width=".6"/></svg>
<div class="t" style="left:70.3px;top:377px;font-size:12.4px;letter-spacing:-0.3px">Assembly</div>
<div class="bx p" style="left:36px;top:398px"></div>
<svg style="left:48px;top:394px" width="16" height="16" viewBox="0 0 16 16"><text x="2.500" y="13.500" font-family="Liberation Serif,serif" font-style="italic" font-weight="bold" font-size="17" fill="#000" letter-spacing="0">F</text><path d="M3 3.500c1.500-2 3-2 5-1.500M1 15.500c2 .8 3.500 0 4.500-2" stroke="#000" stroke-width="1.400" fill="none"/></svg>
<div class="t" style="left:70.3px;top:396px;font-size:12.4px;letter-spacing:-0.3px">Fields</div>
<div class="a" style="left:41px;top:422px;width:5px;height:1px;background:repeating-linear-gradient(to right,#9a9a9a 0 1px,transparent 1px 2px)"></div>
<svg style="left:48px;top:413px" width="16" height="16" viewBox="0 0 16 16"><path d="M1 0v16M0 8.500h16" stroke="#222" stroke-width=".9"/><path d="M1 8.500c2-10 5-10 7 0s5 10 7 0" stroke="#d01010" fill="none" stroke-width="1.200"/></svg>
<div class="t" style="left:70.3px;top:415px;font-size:12.4px;letter-spacing:-0.3px">Amplitudes</div>
<div class="bx p" style="left:36px;top:436px"></div>
<svg style="left:48px;top:432px" width="16" height="16" viewBox="0 0 16 16"><path d="M2.500 1.500h4v8h8v4.500h-12z" fill="#c3cbe4" stroke="#222" stroke-width="1"/><path d="M11 0v7M9 5l2 2.500 2-2.500" stroke="#d01010" fill="none" stroke-width="1.200"/></svg>
<div class="t" style="left:70.3px;top:434px;font-size:12.4px;letter-spacing:-0.3px">Loads (1)</div>
<div class="bx p" style="left:36px;top:455px"></div>
<svg style="left:48px;top:451px" width="16" height="16" viewBox="0 0 16 16"><path d="M2.500 .5h4v8h8v3.500h-12z" fill="#c3cbe4" stroke="#222" stroke-width="1"/><path d="M0 15.5l3-3M3 15.5l3-3M6 15.5l3-3M9 15.5l3-3M12 15.5l3-3" stroke="#d01010" stroke-width=".8" fill="none"/></svg>
<div class="t" style="left:70.3px;top:453px;font-size:12.4px;letter-spacing:-0.3px">BCs (2)</div>
<div class="a" style="left:41px;top:479px;width:5px;height:1px;background:repeating-linear-gradient(to right,#9a9a9a 0 1px,transparent 1px 2px)"></div>
<svg style="left:48px;top:470px" width="16" height="16" viewBox="0 0 16 16"><path d="M2.500 1.500h4v8h8v4.500h-12z" fill="#f0e060" stroke="#222" stroke-width="1"/><path d="M3 13.500l0-6 3 3 8 0v3z" fill="#58c040"/><path d="M3 13.500v-3l3 3z" fill="#e04040"/><path d="M2.500 1.500h4v8h8v4.500h-12z" fill="none" stroke="#222" stroke-width="1"/></svg>
<div class="t" style="left:70.3px;top:472px;font-size:12.4px;letter-spacing:-0.3px">Predefined Fields</div>
<div class="bx p" style="left:36px;top:493px"></div>
<svg style="left:48px;top:489px" width="16" height="16" viewBox="0 0 16 16"><path d="M3.500 1.500h4v8h7v4h-11z" fill="#fff" stroke="#222" stroke-width="1"/><path d="M1 0v15M2 15.500h13M2 14.500v2M15 14.500v2M0 1h2M0 14h2" stroke="#d01010" stroke-width=".9"/></svg>
<div class="t" style="left:70.3px;top:491px;font-size:12.4px;letter-spacing:-0.3px">Sketches (11)</div>
<div class="a" style="left:7px;top:517px;width:7px;height:1px;background:repeating-linear-gradient(to right,#9a9a9a 0 1px,transparent 1px 2px)"></div>
<svg style="left:15px;top:508px" width="16" height="16" viewBox="0 0 16 16"><path d="M0 3l9 9M9 12l-1-4-3 3z" stroke="#000" fill="#000" stroke-width="1"/><text x="8" y="8" font-family="Liberation Sans,sans-serif" font-weight="bold" font-style="italic" font-size="9" fill="#000">A</text></svg>
<div class="t" style="left:36.5px;top:510px;font-size:12.4px;letter-spacing:-0.3px">Annotations</div>
</div>
<div class="a" style="left:228px;top:112px;width:961px;height:31px;background:linear-gradient(#fff,#f0f0f0 80%)"></div>
<div class="t" style="left:236px;top:121px;font-size:12.4px">Module:</div>
<div class="sunk" style="left:285px;top:116px;width:138px;height:24px"></div>
<div class="t" style="left:299px;top:121px;font-size:12.4px">Part</div>
<div class="a" style="left:411px;top:117px;width:11px;height:22px;border:1px solid #0078d7;border-radius:2px;background:#cce4f7"></div>
<svg style="left:412px;top:126px" width="9" height="6"><path d="M0.5 1l4 4 4-4" stroke="#333" fill="none"/></svg>
<svg style="left:287px;top:119px" width="9" height="18"><rect x=".5" y=".5" width="8" height="17" fill="#f4f4f4" stroke="#d8d8d8"/><path d="M1.500 7.500l3-4 3 4z" fill="#a0a0a0"/><path d="M1.500 11l3 4 3-4z" fill="#111"/></svg>
<div class="t" style="left:436px;top:121px;font-size:12.4px">Model:</div>
<div class="sunk" style="left:477px;top:116px;width:90px;height:24px"></div>
<div class="t" style="left:492px;top:121px;font-size:12.4px">Model-1</div>
<div class="a" style="left:554px;top:117px;width:11px;height:22px;border:1px solid #d0d0d0;border-radius:2px;background:#fff"></div>
<svg style="left:555px;top:126px" width="9" height="6"><path d="M0.5 1l4 4 4-4" stroke="#444" fill="none"/></svg>
<svg style="left:479px;top:119px" width="9" height="18"><rect x=".5" y=".5" width="8" height="17" fill="#f4f4f4" stroke="#d8d8d8"/><path d="M1.500 7.500l3-4 3 4z" fill="#8a8a8a"/><path d="M1.500 11l3 4 3-4z" fill="#8a8a8a"/></svg>
<div class="t" style="left:579px;top:121px;font-size:12.4px">Part:</div>
<div class="sunk" style="left:607px;top:116px;width:185px;height:24px"></div>
<div class="t" style="left:622px;top:121px;font-size:12.4px">Part-1</div>
<div class="a" style="left:779px;top:117px;width:11px;height:22px;border:1px solid #d0d0d0;border-radius:2px;background:#fff"></div>
<svg style="left:780px;top:126px" width="9" height="6"><path d="M0.5 1l4 4 4-4" stroke="#444" fill="none"/></svg>
<svg style="left:609px;top:119px" width="9" height="18"><rect x=".5" y=".5" width="8" height="17" fill="#f4f4f4" stroke="#d8d8d8"/><path d="M1.500 7.500l3-4 3 4z" fill="#111"/><path d="M1.500 11l3 4 3-4z" fill="#8a8a8a"/></svg>
<div class="a" style="left:229px;top:143px;width:61px;height:804px;background:linear-gradient(to right,#fdfdfd,#ececec)"></div>
<svg width="0" height="0" style="left:0;top:0"><defs><linearGradient id="gy" x1="0" y1="0" x2="1" y2="1"><stop offset="0" stop-color="#fde9a8"/><stop offset="1" stop-color="#e8a42a"/></linearGradient><linearGradient id="gy2" x1="0" y1="0" x2="1" y2="1"><stop offset="0" stop-color="#f8d070"/><stop offset="1" stop-color="#d88a18"/></linearGradient></defs></svg>
<div class="a" style="left:230px;top:261px;width:58px;height:1px;background:#a0a0a0"></div>
<div class="a" style="left:230px;top:324px;width:58px;height:1px;background:#a0a0a0"></div>
<div class="a" style="left:230px;top:387px;width:58px;height:1px;background:#a0a0a0"></div>
<div class="a" style="left:230px;top:450px;width:58px;height:1px;background:#a0a0a0"></div>
<div class="a" style="left:230px;top:513px;width:58px;height:1px;background:#a0a0a0"></div>
<svg style="left:234.5px;top:150.5px" width="23" height="23"><path d="M2 3.500l2-2h5v9h9.500v4.500l-2 3h-14.500z" fill="url(#gy)" stroke="#5a3e0a" stroke-width="1"/><path d="M2 3.500h5.500v9.500h9v5M7.500 3.500l1.500-2M7.500 13l1.500-2.500M16.500 13l2-2.500" fill="none" stroke="#5a3e0a" stroke-width=".9"/></svg>
<svg style="left:262.5px;top:151px" width="23" height="23"><rect x=".5" y="1.500" width="20" height="17" rx="1.500" fill="#d9c98c" stroke="#5a4a1a"/><path d="M.5 3q0-1.500 1.500-1.500h17q1.500 0 1.500 1.500v3h-20z" fill="#1f6fd0"/><rect x="2.500" y="7.500" width="16" height="6.500" fill="#f4efdc"/><path d="M4 9.500h4M4 12h4M10 9.500h7M10 12h7" stroke="#444" stroke-width="1.200"/><path d="M2.500 15.500h4.500v2h-4.500zM8.500 15.500h4.500v2h-4.500zM14.500 15.500h4v2h-4z" fill="#8a7a3a"/></svg>
<svg style="left:234.5px;top:179px" width="23" height="23"><path d="M1 8l6-7" stroke="#1a6ad8" stroke-width="1.800"/><path d="M9 0l-1 5-4-3z" fill="#1a6ad8"/><path d="M5 11l6-6h4.500v4h4.500v4.500l-6 6h-9z" fill="url(#gy)" stroke="#5a3e0a"/><path d="M5 11h4.500v4h4.500v4.500M9.500 11l6-6M9.500 15l6-6M14 15l6-6" fill="none" stroke="#5a3e0a" stroke-width=".9"/><path d="M22.600 19.700v3.500h-3.500z" fill="#111" stroke="#fff" stroke-width=".5" paint-order="stroke"/></svg>
<svg style="left:262.5px;top:179px" width="23" height="23"><path d="M1 8l6-7" stroke="#1a6ad8" stroke-width="1.500"/><path d="M9 0l-1 5-4-3z" fill="#1a6ad8"/><path d="M5 10l7-7v10l-7 7z" fill="url(#gy)" stroke="#5a3e0a"/><path d="M5 20l7-7h9l-7 7z" fill="#f8dc98" stroke="#5a3e0a"/><path d="M22.600 19.700v3.500h-3.500z" fill="#111" stroke="#fff" stroke-width=".5" paint-order="stroke"/></svg>
<svg style="left:234.5px;top:207.5px" width="23" height="23"><rect x="1" y="1" width="19" height="19" rx="1" fill="url(#gy)" stroke="#b8862a" stroke-width="1"/><path d="M4 17l13-13" stroke="#5a3e0a" stroke-width="1.300"/><path d="M22.600 19.700v3.500h-3.500z" fill="#111" stroke="#fff" stroke-width=".5" paint-order="stroke"/></svg>
<svg style="left:262.5px;top:207.5px" width="23" height="23"><path d="M1 8l6-6" stroke="#1a6ad8" stroke-width="2"/><path d="M9 0l-1 5-4-3z" fill="#1a6ad8"/><path d="M2 10l4-4h14v11l-4 4h-3v-8h-4v8h-7z" fill="url(#gy)" stroke="#5a3e0a"/><path d="M2 10h4.500v11M6.500 10l3-4M9 13v-3.500l3-3.500M13 13l2.500-3h4.500M16 21v-11" fill="none" stroke="#5a3e0a" stroke-width=".9"/><path d="M22.600 19.700v3.500h-3.500z" fill="#111" stroke="#fff" stroke-width=".5" paint-order="stroke"/></svg>
<svg style="left:234.5px;top:235.5px" width="23" height="23"><path d="M2 8l5-6h10l3 3v10l-5 6h-13z" fill="url(#gy)" stroke="#5a3e0a"/><path d="M2 8h9l4 4v9M11 8l5-6" fill="none" stroke="#5a3e0a"/><path d="M9.500 5l3-3h5l3 3.500v3l-4 4.500c-1-4-3-7-7-8z" fill="#4a72c8" stroke="#2a3a6a" stroke-width=".8"/><path d="M22.600 19.700v3.500h-3.500z" fill="#111" stroke="#fff" stroke-width=".5" paint-order="stroke"/></svg>
<svg style="left:262.5px;top:235.5px" width="23" height="23"><path d="M11 0v23" stroke="#1a6ad8" stroke-width="1.500" stroke-dasharray="2.500 2"/><path d="M1 7h3v5h5v4h-8z" fill="url(#gy)" stroke="#b8862a" stroke-width=".8"/><path d="M21 7h-3v5h-5v4h8z" fill="url(#gy)" stroke="#1a6ad8" stroke-width="1.200"/><path d="M6 8c2-3 7-4 10-.5" fill="none" stroke="#1a6ad8" stroke-width="1.300"/><path d="M17 9.500l-3.500-.5 2.500-2.500z" fill="#1a6ad8"/></svg>
<svg style="left:234.5px;top:270.5px" width="23" height="23"><path d="M1 14h14v5h-14z" fill="url(#gy)" stroke="#5a3e0a"/><path d="M5 2h6v12h-6z" fill="url(#gy)" stroke="#5a3e0a"/><path d="M5 5h8M13 5v9" stroke="#e01010" stroke-width="1.600" stroke-dasharray="2 1.500" fill="none"/><path d="M22.600 19.700v3.500h-3.500z" fill="#111" stroke="#fff" stroke-width=".5" paint-order="stroke"/></svg>
<svg style="left:262.5px;top:270.5px" width="23" height="23"><path d="M1 12h8v6h-8zM12 12h8v6h-8z" fill="url(#gy)" stroke="#5a3e0a"/><path d="M3 1h4v11h-4z" fill="url(#gy)" stroke="#5a3e0a"/><path d="M9 7h5" stroke="#e01010" stroke-width="2"/><path d="M17 7l-4-3v6z" fill="#e01010"/><path d="M22.600 19.700v3.500h-3.500z" fill="#111" stroke="#fff" stroke-width=".5" paint-order="stroke"/></svg>
<svg style="left:234.5px;top:298.5px" width="23" height="23"><path d="M5 14v-11h5" stroke="#222" stroke-dasharray="2 1.500" fill="none"/><path d="M1 14h14v5h-14z" fill="url(#gy)" stroke="#5a3e0a"/><path d="M9 12l3 1 7-9-4-3-8 8z" fill="#f0b040" stroke="#7a5a1a" stroke-width=".6"/><path d="M7 9l2 3.500 3 .5 2-3-4.500-3.500z" fill="#e890a8"/><path d="M9.500 6.500l4.500 3.500 1.500-2-4.500-3.500z" fill="#9a9aa8"/></svg>
<svg style="left:234.5px;top:333px" width="23" height="23"><path d="M0 4.500h4M12 4.500h9" stroke="#111" stroke-width="1.200"/><path d="M8 .5v8M4 4.500h8" stroke="#1a6ad8" stroke-width="1.600"/><path d="M10.500 7l8 5-3.500.800 3 4.500-2 1.300-3-4.500-2.300 2.500z" fill="#fff" stroke="#111" stroke-width="1.100"/><path d="M22.600 19.700v3.500h-3.500z" fill="#111" stroke="#fff" stroke-width=".5" paint-order="stroke"/></svg>
<svg style="left:262.5px;top:333px" width="23" height="23"><path d="M2 2h5v8h11v5h-16z" fill="url(#gy)" stroke="#b8862a" stroke-width="1"/><circle cx="4.500" cy="12" r="2.300" fill="none" stroke="#e01010" stroke-width="1.300"/><path d="M22.600 19.700v3.500h-3.500z" fill="#111" stroke="#fff" stroke-width=".5" paint-order="stroke"/></svg>
<svg style="left:234.5px;top:361px" width="23" height="23"><path d="M2 5l3-3h5v9h8v6l-3 3h-13z" fill="url(#gy)" stroke="#5a3e0a"/><path d="M2 5h5v9h8v6M7 5l3-3M15 14l3-3" fill="none" stroke="#5a3e0a" stroke-width=".9"/><path d="M4 7v11M4 16h9" stroke="#8a6a1a" stroke-width=".8" stroke-dasharray="1.500 1.500"/><ellipse cx="12.500" cy="15.500" rx="1.800" ry="4" fill="none" stroke="#e01010" stroke-width="1.300" transform="rotate(15 12.500 15.500)"/><path d="M22.600 19.700v3.500h-3.500z" fill="#111" stroke="#fff" stroke-width=".5" paint-order="stroke"/></svg>
<svg style="left:262.5px;top:361px" width="23" height="23"><path d="M1 1h5.500v6l5 3.500h4.500v5h-10l-5-4z" fill="url(#gy)" stroke="#8a5a10"/><path d="M8 8l8 10" stroke="#888" stroke-width="2.200"/><path d="M8 8l8 10" stroke="#ddd" stroke-width=".8"/><circle cx="14" cy="21" r="1.800" fill="none" stroke="#b01010" stroke-width="1.200"/><circle cx="19.500" cy="18.500" r="1.800" fill="none" stroke="#b01010" stroke-width="1.200"/><path d="M16 18l-1.500 2M16 18l2.500 .3" stroke="#b01010" stroke-width="1.200"/></svg>
<svg style="left:234.5px;top:395.5px" width="23" height="23"><text x="0" y="8" font-family="Liberation Mono,monospace" font-weight="bold" font-size="8.500" fill="#111" letter-spacing="-.6">(XYZ)</text><path d="M10 10v8M6 14h8" stroke="#1a6ad8" stroke-width="1.600"/><path d="M22.600 19.700v3.500h-3.500z" fill="#111" stroke="#fff" stroke-width=".5" paint-order="stroke"/></svg>
<svg style="left:262.5px;top:395.5px" width="23" height="23"><path d="M11 0v18" stroke="#1a6ad8" stroke-width="1.400"/><path d="M11 2l-2.500 4h5z" fill="#1a6ad8"/><path d="M11 4l-2 3.500h4z" fill="#111"/><path d="M11 12l-7 6M11 12l7 6" stroke="#111" stroke-width="1.400"/><path d="M2.500 19.500l1-4.500 3 3zM19.500 19.500l-1-4.500-3 3z" fill="#111"/><path d="M22.600 19.700v3.500h-3.500z" fill="#111" stroke="#fff" stroke-width=".5" paint-order="stroke"/></svg>
<svg style="left:234.5px;top:423px" width="23" height="23"><path d="M4 3v6l5 1M4 9l-3 3" stroke="#111" stroke-width="1.300" fill="none"/><path d="M4 1l-1.500 3h3zM11 10.500l-3-2v3z" fill="#111"/><path d="M1 17.500h11" stroke="#111" stroke-width="1.300"/><path d="M0 17.500l3-2v4zM13 17.500l-3-2v4z" fill="#111"/><path d="M14 8l6-6v9l-6 6z" fill="url(#gy)" stroke="#1a6ad8" stroke-width=".9"/><path d="M22.600 19.700v3.500h-3.500z" fill="#111" stroke="#fff" stroke-width=".5" paint-order="stroke"/></svg>
<svg style="left:262.5px;top:423px" width="23" height="23"><path d="M8 1h6l-3 2.500zM8 13.500h6l-3 2.500z" fill="#e01010"/><path d="M11 4v6" stroke="#1a6ad8" stroke-width="1.500"/><path d="M11 11l-2.500-3h5z" fill="#1a6ad8"/><path d="M11 16l-5 3.500M11 16l4 3" stroke="#1a6ad8" stroke-width="1.500" stroke-dasharray="2.500 1.500"/><path d="M3.500 21l1.200-3.800 2.500 3zM13 17l3.800 1.200-2.300 2.600z" fill="#1a6ad8"/><path d="M13.500 21.500h4.500M15.800 19.300v4.500" stroke="#e01010" stroke-width="1.200"/><path d="M22.600 19.700v3.500h-3.500z" fill="#111" stroke="#fff" stroke-width=".5" paint-order="stroke"/></svg>
<svg style="left:234.5px;top:458px" width="23" height="23"><path d="M4 2h8l-3 6h-8z" fill="url(#gy)" stroke="#5a3e0a"/><path d="M10 13h8l-3 7h-8z" fill="url(#gy)" stroke="#5a3e0a"/><path d="M13 2c4 0 6 2 6.500 5" stroke="#e01010" stroke-width="1.500" fill="none"/><path d="M20.500 9.500l-4-2 4-2z" fill="#e01010" transform="rotate(-40 19 8)"/><path d="M22.600 19.700v3.500h-3.500z" fill="#111" stroke="#fff" stroke-width=".5" paint-order="stroke"/></svg>
<svg style="left:262.5px;top:458px" width="23" height="23"><rect x="1" y="1" width="19" height="17" fill="url(#gy)" stroke="#b8862a"/><path d="M1 6h19M1 14h19" stroke="#8a6a1a" stroke-width=".7"/><path d="M1 12l3-4 3 5 3-5 3 5 3-5 3 5 2-4" stroke="#1a5ad0" stroke-width="1.500" fill="none"/><path d="M22.600 19.700v3.500h-3.500z" fill="#111" stroke="#fff" stroke-width=".5" paint-order="stroke"/></svg>
<svg style="left:234.5px;top:487px" width="23" height="23"><rect x="2" y="4" width="14" height="15" fill="url(#gy)" stroke="#b8862a" stroke-width="1.200"/><path d="M4 10c2-2 5-1 7 0s4 2 3 5-7 3-9 1-2-4-1-6z" fill="#fdfdfd"/><path d="M9 12l3 1 7-9-4-3-8 8z" fill="#f0b040" stroke="#7a5a1a" stroke-width=".6"/><path d="M7 9l2 3.500 3 .5 2-3-4.500-3.500z" fill="#e890a8"/><path d="M9.500 6.500l4.500 3.500 1.500-2-4.500-3.500z" fill="#9a9aa8"/><path d="M22.600 19.700v3.500h-3.500z" fill="#111" stroke="#fff" stroke-width=".5" paint-order="stroke"/></svg>
<svg style="left:262.5px;top:487px" width="23" height="23"><path d="M3 3c1-2 4-2 5-.5l-2 2 1.500 1.500 2-2c1.500 1.500 1 4-.5 4.500l9 9-2 2-9-9c-2 1-4.500 0-4.500-2z" fill="#8a8a8a" stroke="#4a4a4a" stroke-width=".6" transform="translate(1,0)"/><path d="M17 1l3 2.500-10 12-3-2.500z" fill="#8a8a8a" stroke="#4a4a4a" stroke-width=".6"/><path d="M9 11l3 2.500-6 7.500-3.500-2.500z" fill="#2a8a4a" stroke="#0a4a1a" stroke-width=".7"/></svg>
<svg style="left:234.5px;top:521.5px" width="23" height="23"><path d="M2 6l4-4h5v9h9v5l-4 4h-14z" fill="url(#gy2)" stroke="#3a2806" stroke-width="1.200"/><path d="M2 6h5v9h9v5M7 6l4-4M16 15l4-4" fill="none" stroke="#3a2806"/><path d="M4 8v10h10" stroke="#1a6ad8" stroke-width="1.300" stroke-dasharray="2.500 1.500" fill="none"/><path d="M5 3.500h4" stroke="#1a6ad8" stroke-width="1.300" stroke-dasharray="2 1"/></svg>
<svg style="left:262.5px;top:521.5px" width="23" height="23"><path d="M1 9l6-5h8l-3 4 2 7-7 4-6-3z" fill="#2ab82a" stroke="#0a6a0a"/><path d="M4 10l5-3h4l-1 3 1 4-5 2z" fill="#d8c070" stroke="#7a5a1a" stroke-width=".8"/><path d="M10 8l11 1-4 9-8-1z" fill="#f0a830" opacity=".85"/></svg>
<div class="a" style="left:289px;top:144px;width:1px;height:802px;background:#fff"></div>
<svg style="left:290px;top:144px" width="898" height="802" viewBox="290 144 898 802" shape-rendering="crispEdges">
<defs><linearGradient id="vbg" x1="0" y1="0" x2="0" y2="1"><stop offset="0.0000" stop-color="#999999"/><stop offset="0.3691" stop-color="#9e9e9e"/><stop offset="0.5686" stop-color="#a2a2a2"/><stop offset="0.6683" stop-color="#a6a6a6"/><stop offset="0.7307" stop-color="#adadad"/><stop offset="0.8055" stop-color="#b5b5b5"/><stop offset="0.8803" stop-color="#bebebe"/><stop offset="1.0000" stop-color="#cacaca"/></linearGradient><clipPath id="vc"><rect x="290" y="144" width="898" height="802"/></clipPath></defs>
<rect x="290" y="144" width="898" height="802" fill="url(#vbg)"/>
<g clip-path="url(#vc)">
<polygon points="409,635.5 456.4,577 576,467 721,365.5 891,269.7 1088,181.3 1180,145 1188,145 1188,540 1132.6,599.5 1097.7,651.4 1000.5,649.2 832,645.2 753.5,643.8 674.3,642 505.7,638 409,635.5" fill="#d9d9d9"/>
<polygon points="505.7,638 527.3,717.2 655.5,719.7 674.3,642" fill="#bfbfbf"/>
<polygon points="832,645.2 853,724 981.2,726.4 1000.5,649.2" fill="#bfbfbf"/>
<polygon points="674.3,642 703.2,643.3 699.8,661.7 658,716 655.5,719.7" fill="#787878"/><polygon points="703.2,643.3 718,643.8 699.8,661.7" fill="#8c8c8c"/>
<polygon points="1000.5,649.2 1024.2,650 1019.5,671.8 982.4,725.4 981.2,726.4" fill="#787878"/><polygon points="1024.2,650 1038.8,650.4 1019.5,671.8" fill="#8c8c8c"/>
<g fill="none" stroke="#000" stroke-width="1" shape-rendering="crispEdges">
<polyline points="1180,145 1088,181.3 891,269.7 721,365.5 576,467 456.4,577 409,635.5"/>
<polyline points="1188,181 1167,190 974,277.7 810,371 666.7,471.5 550.5,580.5 505.7,638"/>
<polyline points="1188,258 1118,290 958.5,382 823.5,480 717.3,585.5 674.3,642"/>
<polyline points="1188,296 1030,386.5 898.5,484 795,588 753.5,643.8"/>
<polyline points="1188,341 1099,391.5 973,488.5 872,590.6 832,645.2"/>
<polyline points="1188,453.5 1132.8,495.6 1036.7,596 1000.5,649.2"/>
<polyline points="1188,540 1132.6,599.5 1097.7,651.4"/>
<polyline points="456.4,577 550.5,580.5 717.3,585.5 795,588 872,590.6 1036.7,596 1132.6,599.5"/>
<polyline points="1088,181.3 1167,190 1188,192.3"/>
<polyline points="409,635.5 505.7,638 674.3,642 753.5,643.8 832,645.2 1000.5,649.2 1097.7,651.4"/>
<polyline points="505.7,638 527.3,717.2 655.5,719.7 674.3,642"/><polyline points="832,645.2 853,724 981.2,726.4 1000.5,649.2"/>
<polyline points="703.2,643.3 699.8,661.7 658,716 655.5,719.7"/><polyline points="718,643.8 699.8,661.7"/>
<polyline points="1024.2,650 1019.5,671.8 982.4,725.4 981.2,726.4"/><polyline points="1038.8,650.4 1019.5,671.8"/>
</g>
<path d="M683 147h2v1h-2zM689 147h2v1h-2zM691 148h2v1h-2zM699 149h2v1h-2zM705 149h2v1h-2zM707 150h2v1h-2zM715 151h2v1h-2zM721 151h1v1h-1zM722 152h3v1h-3zM731 153h2v1h-2zM737 153h1v1h-1zM738 154h3v1h-3zM747 155h2v1h-2zM753 155h1v1h-1zM754 156h3v1h-3zM763 157h2v1h-2zM769 158h4v1h-4zM779 159h2v1h-2zM785 160h4v1h-4zM795 161h2v1h-2zM801 162h4v1h-4zM811 163h2v1h-2zM817 164h4v1h-4zM827 165h2v1h-2zM833 166h4v1h-4zM843 167h2v1h-2zM849 168h4v1h-4zM859 169h2v1h-2zM865 170h4v1h-4zM875 171h2v1h-2zM881 172h4v1h-4zM891 173h2v1h-2zM897 174h4v1h-4zM907 175h2v1h-2zM913 176h4v1h-4zM923 177h2v1h-2zM929 178h4v1h-4zM939 179h2v1h-2zM945 180h4v1h-4zM955 181h2v1h-2zM961 182h4v1h-4zM971 183h2v1h-2zM977 184h4v1h-4zM987 185h2v1h-2zM993 186h4v1h-4zM1003 187h2v1h-2zM1009 188h4v1h-4zM1019 189h2v1h-2zM1025 190h3v1h-3zM1028 191h1v1h-1zM1035 191h1v1h-1zM1036 192h1v1h-1zM1041 192h3v1h-3zM1044 193h1v1h-1zM1051 193h1v1h-1zM1052 194h1v1h-1zM1057 194h3v1h-3zM1060 195h1v1h-1zM1067 195h1v1h-1zM1068 196h1v1h-1zM1073 196h2v1h-2zM1075 197h2v1h-2zM1083 198h2v1h-2zM1089 198h2v1h-2zM1091 199h2v1h-2zM1099 200h2v1h-2zM1105 200h2v1h-2zM1107 201h2v1h-2zM1115 202h2v1h-2zM1121 202h2v1h-2zM1123 203h2v1h-2zM1131 204h2v1h-2zM1137 204h1v1h-1zM1138 205h3v1h-3zM1147 206h2v1h-2zM1153 206h1v1h-1zM1154 207h3v1h-3zM1163 208h2v1h-2zM1169 208h1v1h-1zM1170 209h3v1h-3zM1179 210h2v1h-2zM1185 211h3v1h-3zM290 630h4v1h-4zM300 630h2v1h-2zM306 630h4v1h-4zM316 630h2v1h-2zM322 630h2v1h-2zM324 631h2v1h-2zM332 631h2v1h-2zM338 631h4v1h-4zM348 631h2v1h-2zM354 631h4v1h-4zM364 631h2v1h-2zM370 631h1v1h-1zM371 632h3v1h-3zM380 632h2v1h-2zM386 632h4v1h-4zM396 632h2v1h-2zM402 632h4v1h-4zM412 632h2v1h-2zM418 633h4v1h-4zM428 633h2v1h-2zM434 633h4v1h-4zM444 633h2v1h-2zM450 633h4v1h-4zM460 633h2v1h-2zM466 634h4v1h-4zM476 634h2v1h-2zM482 634h4v1h-4zM492 634h2v1h-2zM498 634h4v1h-4zM508 634h2v1h-2zM514 635h4v1h-4zM524 635h2v1h-2zM530 635h4v1h-4zM540 635h2v1h-2zM546 635h4v1h-4zM556 635h2v1h-2zM562 636h4v1h-4zM572 636h2v1h-2zM578 636h4v1h-4zM588 636h2v1h-2zM594 636h4v1h-4zM604 636h2v1h-2zM610 637h4v1h-4zM620 637h2v1h-2zM626 637h4v1h-4zM636 637h2v1h-2zM642 637h4v1h-4zM652 637h2v1h-2zM658 638h4v1h-4zM668 638h2v1h-2zM674 638h4v1h-4zM684 638h2v1h-2zM690 638h4v1h-4zM700 638h2v1h-2zM706 639h4v1h-4zM716 639h2v1h-2zM722 639h4v1h-4zM732 639h2v1h-2zM738 639h4v1h-4zM748 639h1v1h-1zM749 640h1v1h-1zM754 640h4v1h-4zM764 640h2v1h-2zM770 640h4v1h-4zM780 640h2v1h-2zM786 640h4v1h-4zM796 641h2v1h-2zM802 641h4v1h-4zM812 641h2v1h-2zM818 641h4v1h-4zM828 641h2v1h-2zM834 641h4v1h-4zM844 642h2v1h-2zM850 642h4v1h-4zM860 642h2v1h-2zM866 642h4v1h-4zM876 642h2v1h-2zM882 642h4v1h-4zM892 643h2v1h-2zM898 643h4v1h-4zM908 643h2v1h-2zM914 643h4v1h-4zM924 643h2v1h-2zM930 643h4v1h-4zM940 644h2v1h-2zM946 644h4v1h-4zM956 644h2v1h-2zM962 644h4v1h-4zM972 644h2v1h-2zM978 644h4v1h-4zM988 645h2v1h-2zM994 645h4v1h-4zM1004 645h2v1h-2zM1010 645h4v1h-4zM1020 645h2v1h-2zM1026 645h4v1h-4zM1036 646h2v1h-2zM1042 646h4v1h-4zM1052 646h2v1h-2zM1058 646h4v1h-4zM1068 646h2v1h-2zM1074 646h4v1h-4zM1084 647h2v1h-2zM1090 647h4v1h-4zM1100 647h2v1h-2zM1106 647h4v1h-4zM1116 647h2v1h-2zM1122 647h4v1h-4zM1132 648h2v1h-2zM1138 648h4v1h-4zM1148 648h2v1h-2zM1154 648h4v1h-4zM1164 648h2v1h-2zM1170 648h4v1h-4zM1180 649h2v1h-2zM1186 649h2v1h-2zM290 716h4v1h-4zM300 716h2v1h-2zM306 716h4v1h-4zM316 716h2v1h-2zM322 717h4v1h-4zM332 717h2v1h-2zM338 717h4v1h-4zM348 717h2v1h-2zM354 717h4v1h-4zM364 717h2v1h-2zM370 717h1v1h-1zM371 718h3v1h-3zM380 718h2v1h-2zM386 718h4v1h-4zM396 718h2v1h-2zM402 718h4v1h-4zM412 718h2v1h-2zM418 718h1v1h-1zM419 719h3v1h-3zM428 719h2v1h-2zM434 719h4v1h-4zM444 719h2v1h-2zM450 719h4v1h-4zM460 719h2v1h-2zM466 719h2v1h-2zM468 720h2v1h-2zM476 720h2v1h-2zM482 720h4v1h-4zM492 720h2v1h-2zM498 720h4v1h-4zM508 720h2v1h-2zM514 720h2v1h-2zM516 721h2v1h-2zM524 721h2v1h-2zM530 721h4v1h-4zM540 721h2v1h-2zM546 721h4v1h-4zM556 721h2v1h-2zM562 721h3v1h-3zM565 722h1v1h-1zM572 722h2v1h-2zM578 722h4v1h-4zM588 722h2v1h-2zM594 722h4v1h-4zM604 722h2v1h-2zM610 722h3v1h-3zM613 723h1v1h-1zM620 723h2v1h-2zM626 723h4v1h-4zM636 723h2v1h-2zM642 723h4v1h-4zM652 723h2v1h-2zM658 723h4v1h-4zM668 724h2v1h-2zM674 724h4v1h-4zM684 724h2v1h-2zM690 724h4v1h-4zM700 724h2v1h-2zM706 724h4v1h-4zM716 725h2v1h-2zM722 725h4v1h-4zM732 725h2v1h-2zM738 725h4v1h-4zM748 725h2v1h-2zM754 725h4v1h-4zM764 726h2v1h-2zM770 726h4v1h-4zM780 726h2v1h-2zM786 726h4v1h-4zM796 726h2v1h-2zM802 726h4v1h-4zM812 727h2v1h-2zM818 727h4v1h-4zM828 727h2v1h-2zM834 727h4v1h-4zM844 727h2v1h-2zM850 727h4v1h-4zM860 728h2v1h-2zM866 728h4v1h-4zM876 728h2v1h-2zM882 728h4v1h-4zM892 728h2v1h-2zM898 728h4v1h-4zM908 729h2v1h-2zM914 729h4v1h-4zM924 729h2v1h-2zM930 729h4v1h-4zM940 729h2v1h-2zM946 729h4v1h-4zM956 730h2v1h-2zM962 730h4v1h-4zM972 730h2v1h-2zM978 730h4v1h-4zM988 730h2v1h-2zM994 730h4v1h-4zM1004 731h2v1h-2zM1010 731h4v1h-4zM1020 731h2v1h-2zM1026 731h4v1h-4zM1036 731h2v1h-2zM1042 731h4v1h-4zM1052 732h2v1h-2zM1058 732h4v1h-4zM1068 732h2v1h-2zM1074 732h4v1h-4zM1084 732h2v1h-2zM1090 732h4v1h-4zM1100 733h2v1h-2zM1106 733h4v1h-4zM1116 733h2v1h-2zM1122 733h4v1h-4zM1132 733h2v1h-2zM1138 733h4v1h-4zM1148 734h2v1h-2zM1154 734h4v1h-4zM1164 734h2v1h-2zM1170 734h4v1h-4zM1180 734h2v1h-2zM1186 734h2v1h-2z" fill="#ffff00"/>
<g fill="none" stroke="#ffff00" stroke-width="1.2" shape-rendering="auto">
<path d="M512 664L527.3 717.2L538.6 702.8M527.3 717.2L581 705.4M590.3 663V718.3M590.3 718.3L652 719.6M590.3 718.3L586 726"/>
<path d="M994 674L981.2 726.4L1035.3 741.2"/>
</g>
<g fill="#ffff00" stroke="#ffff00" stroke-width=".35" font-family="Liberation Serif,serif" font-size="11" text-anchor="middle" letter-spacing="0">
<text x="514" y="659">Y</text>
<text x="593.6" y="659">Y</text>
<text x="543" y="702">X</text>
<text x="591" y="706">Z</text>
<text x="584" y="735">Z</text>
<text x="657" y="721">X</text>
<text x="998.8" y="669">Y</text>
<text x="996.5" y="712">X</text>
<text x="1044.7" y="744">Z</text>
</g>
<g shape-rendering="auto">
<defs><linearGradient id="gb" x1="0" x2="1"><stop offset="0" stop-color="#0000b0"/><stop offset=".5" stop-color="#0000d8"/><stop offset="1" stop-color="#00009a"/></linearGradient></defs>
<path d="M425.5 878.5L403.5 875.3L403.5 880.8L425.5 884.3z" fill="#00d000"/>
<path d="M387 874.7L401 869.2Q404.5 869 403.8 873L402.5 883Q401 886 398.5 884.5z" fill="#00a800"/>
<path d="M387 874.7L398 871.5L397 882z" fill="#00c800"/>
<path d="M426.5 880L445 873L446.5 878L427 885z" fill="#a80000"/>
<ellipse cx="444.5" cy="876.5" rx="7" ry="7.6" fill="#e00000"/>
<path d="M446 869.5L453 874L449.5 881z" fill="#8a0000"/>
<ellipse cx="445" cy="877" rx="3" ry="3.4" fill="#b00000"/>
<rect x="423" y="851" width="7.6" height="31.6" fill="url(#gb)"/><path d="M426.5 835.3L434.3 852H418.2z" fill="#0000c8"/>
<ellipse cx="426.8" cy="882.4" rx="3.8" ry="1.6" fill="#0000a0"/>
</g>
<g fill="#fff" font-family="DejaVu Sans,Liberation Sans,sans-serif" font-weight="bold" font-size="25" text-anchor="middle" letter-spacing="0">
<text x="426.2" y="818.8">3</text><text x="366.5" y="878">2</text><text x="467.5" y="876">1</text>
</g>
</g>
<rect x="290" y="144" width="1" height="802" fill="#6b6b6b"/><rect x="290" y="144" width="898" height="1" fill="#6b6b6b"/>
<rect x="290" y="945" width="898" height="1" fill="#adadad"/>
</svg>
<div class="a" style="left:228px;top:947px;width:961px;height:32px;background:linear-gradient(#fff 0,#f2f2f2 60%,#f0f0f0)"></div>
<div class="a" style="left:1px;top:979px;width:1188px;height:6px;background:#fafafa"></div>
<div class="a" style="left:1px;top:985px;width:1188px;height:113px;background:#f0f0f0"></div>
<div class="a" style="left:42px;top:985px;width:1129px;height:110px;background:#fff;border:1px solid #a5a5a5"></div>
<div class="t" style="left:48.500px;top:988.500px;font-family:'Liberation Mono',monospace;font-size:13.500px;letter-spacing:0;color:#222">&gt;&gt;&gt;</div>
<div class="a" style="left:5px;top:986px;width:34px;height:33px;background:#f4f4f4;border:1px solid #e2e2e2"></div>
<div class="a" style="left:5px;top:1019px;width:34px;height:39px;background:#f4f4f4;border:1px solid #e2e2e2;border-top:none"></div>
<div class="a" style="left:14px;top:994px;width:18px;height:18px;border:1px solid #555;background:linear-gradient(135deg,#fbfbf6,#c9c9bd)"></div>
<svg style="left:12px;top:1003px" width="12" height="12"><path d="M1 10l1-3 6-6 2 2-6 6z" fill="#e8b43a" stroke="#5a4208" stroke-width=".8"/></svg>
<div class="a" style="left:10px;top:1027px;width:24px;height:24px;border:1px solid #6b5a1e;background:linear-gradient(#f6e79a,#e2c65a)"></div>
<svg style="left:13px;top:1034px" width="18" height="10"><path d="M1 1l4 4-4 4M7 1l4 4-4 4M13 1l4 4-4 4" stroke="#111" stroke-width="1.8" fill="none"/></svg>
<svg style="left:1174px;top:1081px" width="14" height="14"><g fill="#9a9a9a"><rect x="11" y="1" width="2" height="2"/><rect x="6" y="6" width="2" height="2"/><rect x="11" y="6" width="2" height="2"/><rect x="1" y="11" width="2" height="2"/><rect x="6" y="11" width="2" height="2"/><rect x="11" y="11" width="2" height="2"/></g></svg>
<div class="a" style="left:297px;top:139px;width:125px;height:287px;background:#fff;border:1px solid #646464"></div>
<div class="a" style="left:298px;top:140px;width:123px;height:19px;background:#0078d7"></div>
<div class="t" style="left:301.5px;top:142.6px;color:#fff;letter-spacing:-0.2px">Part</div>
<div class="t" style="left:301.5px;top:161.6px;color:#000;letter-spacing:-0.2px">Property</div>
<div class="t" style="left:301.5px;top:180.6px;color:#000;letter-spacing:-0.2px">Assembly</div>
<div class="t" style="left:301.5px;top:199.6px;color:#000;letter-spacing:-0.2px">Step</div>
<div class="t" style="left:301.5px;top:218.6px;color:#000;letter-spacing:-0.2px">Interaction</div>
<div class="t" style="left:301.5px;top:237.6px;color:#000;letter-spacing:-0.2px">Load</div>
<div class="a" style="left:298px;top:255px;width:70px;height:16px;background:#df96bb"></div>
<div class="t" style="left:301.5px;top:256.6px;color:#5a0a32;letter-spacing:-0.2px">Prestress</div>
<div class="a" style="left:298px;top:274px;width:79px;height:16px;background:#df96bb"></div>
<div class="t" style="left:301.5px;top:275.6px;color:#5a0a32;letter-spacing:-0.2px">Live Load</div>
<div class="a" style="left:298px;top:293px;width:112px;height:16px;background:#df96bb"></div>
<div class="t" style="left:301.5px;top:294.6px;color:#5a0a32;letter-spacing:-0.2px">Dynamic Live Load</div>
<div class="a" style="left:298px;top:312px;width:107px;height:16px;background:#df96bb"></div>
<div class="t" style="left:301.5px;top:313.6px;color:#5a0a32;letter-spacing:-0.2px">Load Combination</div>
<div class="a" style="left:298px;top:331px;width:89px;height:16px;background:#df96bb"></div>
<div class="t" style="left:301.5px;top:332.6px;color:#5a0a32;letter-spacing:-0.2px">Reinforcement</div>
<div class="t" style="left:301.5px;top:351.6px;color:#000;letter-spacing:-0.2px">Mesh</div>
<div class="t" style="left:301.5px;top:370.6px;color:#000;letter-spacing:-0.2px">Job</div>
<div class="t" style="left:301.5px;top:389.6px;color:#000;letter-spacing:-0.2px">Visualization</div>
<div class="t" style="left:301.5px;top:408.6px;color:#000;letter-spacing:-0.2px">Sketch</div>
<div class="a" style="left:0;top:0;width:1190px;height:1099px;border:1px solid #6d6d6d;border-right-color:#5e5e5e;pointer-events:none"></div>
</body></html>
